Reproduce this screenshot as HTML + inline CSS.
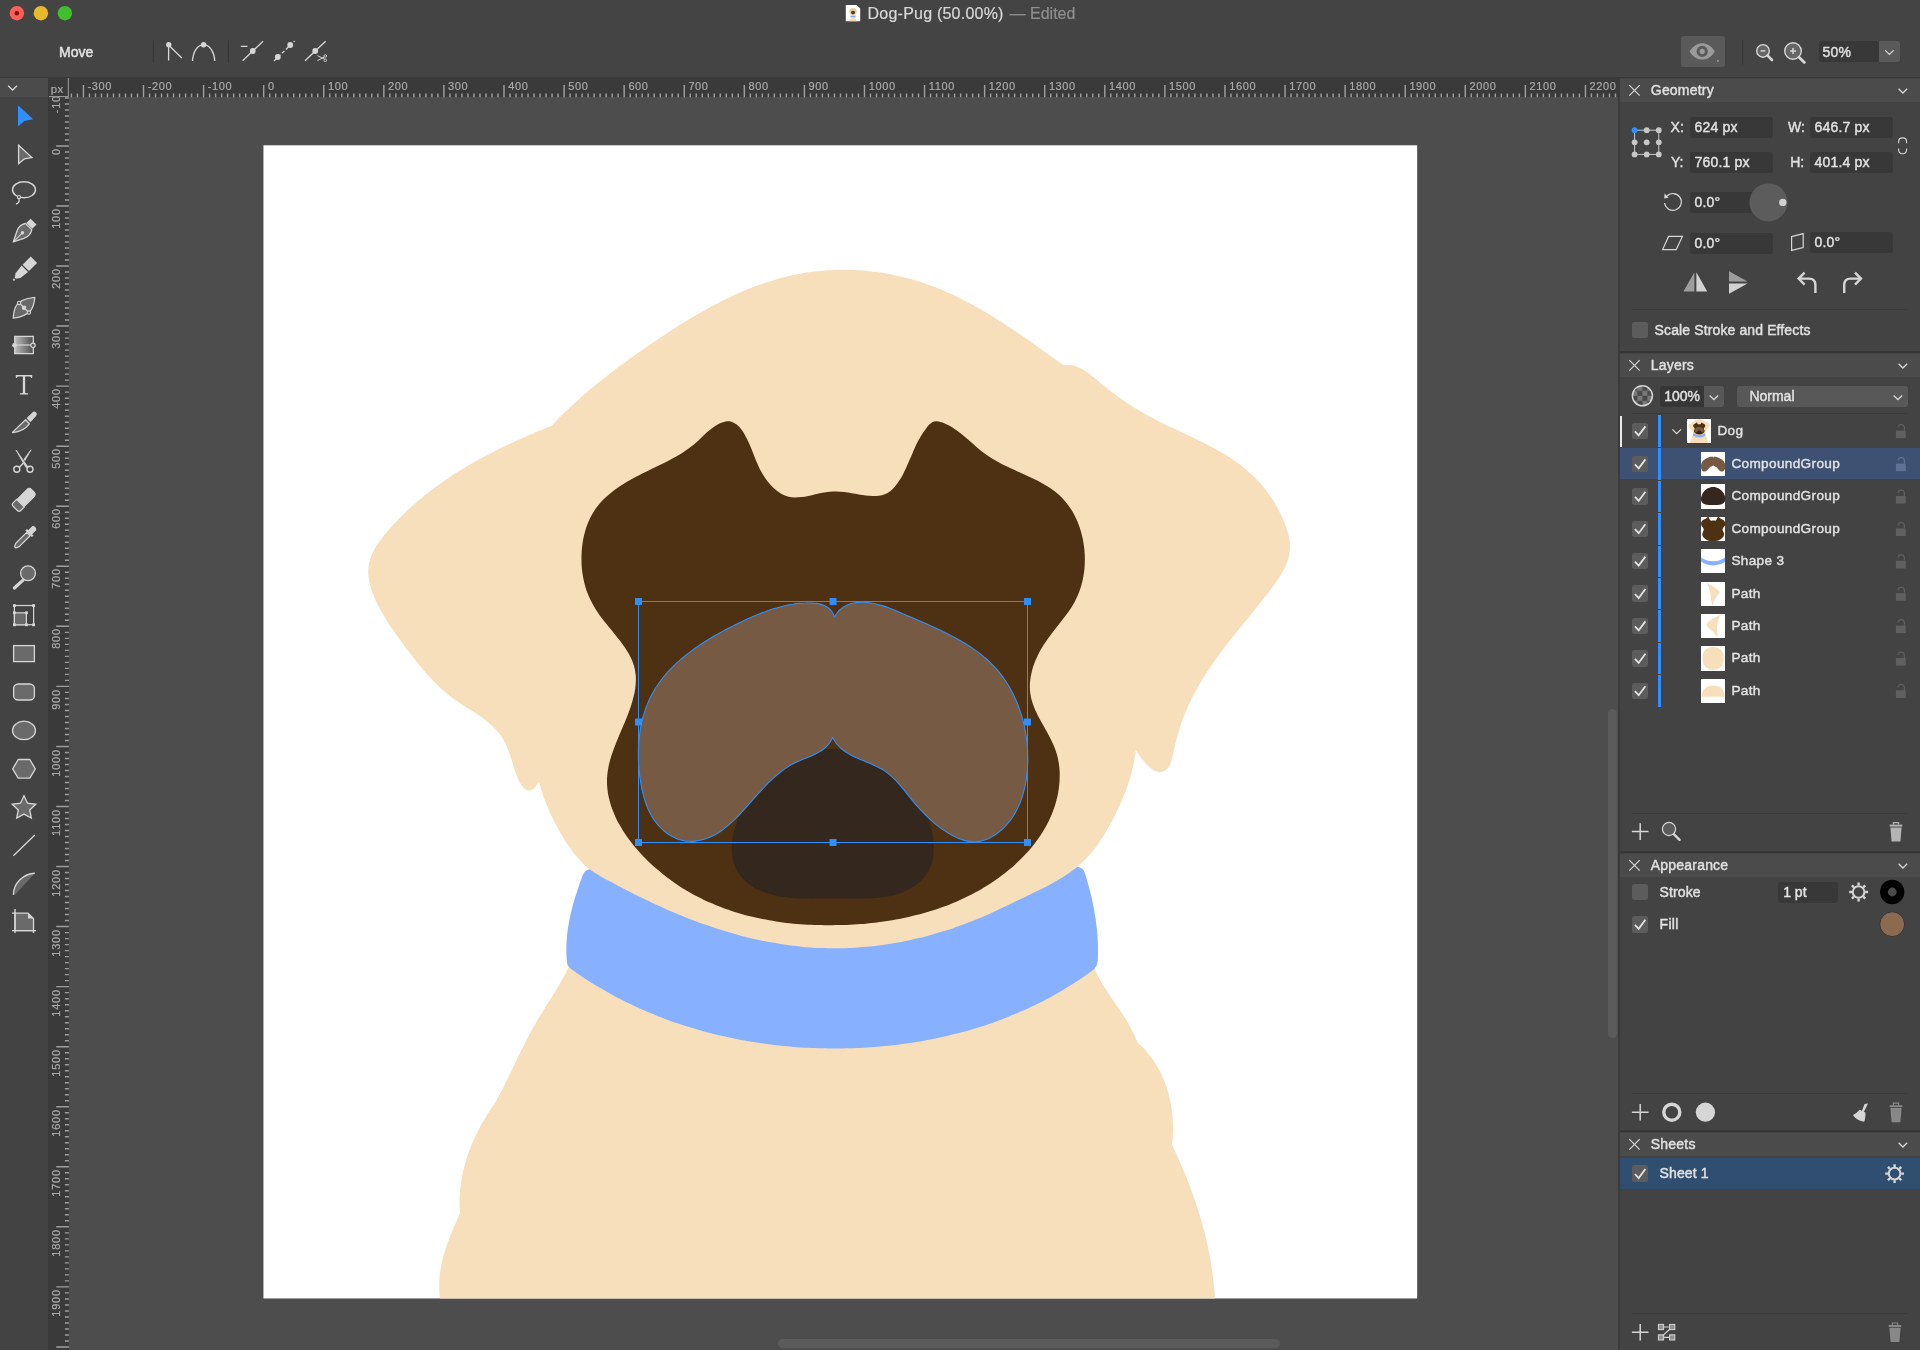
<!DOCTYPE html><html lang="en"><head><meta charset="utf-8"><title>Dog-Pug (50.00%) — Edited</title><style>
*{box-sizing:border-box;margin:0;padding:0}
html,body{width:1920px;height:1350px;overflow:hidden;background:#4d4d4d}
body{position:relative;will-change:transform;font-family:"Liberation Sans",sans-serif;color:#dedede;font-size:14px;line-height:1;-webkit-font-smoothing:antialiased}
.a{position:absolute}
.t{position:absolute;white-space:nowrap;line-height:16px;height:16px;-webkit-text-stroke:0.42px currentColor}
svg{position:absolute;left:0;top:0;overflow:visible}
#top{left:0;top:0;width:1920px;height:77.2px;background:#444}
#topline{left:0;top:76.8px;width:1920px;height:1.8px;background:#383838}
#left{left:0;top:78px;width:48px;height:1272px;background:#434343}
#lefthead{left:0;top:78px;width:48px;height:19px;background:#4b4b4b}
#vr{left:48.2px;top:77.3px;width:20.9px;height:1273px;background:#3a3a3a;overflow:hidden}
#hr{left:48.2px;top:77.3px;width:1570px;height:20.1px;background:#3a3a3a;overflow:hidden}
#corner{left:48.2px;top:77.3px;width:20.9px;height:20.1px;background:#3a3a3a}
.rl{position:absolute;font-size:11px;color:#ababab;letter-spacing:0.62px;-webkit-text-stroke:0.18px currentColor;line-height:12px;height:12px;white-space:nowrap}
.vl{position:absolute;font-size:11px;color:#ababab;letter-spacing:0.82px;-webkit-text-stroke:0.18px currentColor;line-height:12px;height:12px;white-space:nowrap;transform-origin:0 0;transform:rotate(-90deg)}
#panel{left:1620px;top:78px;width:300px;height:1272px;background:#434343}
#pborder{left:1618px;top:78px;width:2px;height:1272px;background:#3a3a3a}
.ph{position:absolute;left:1620px;width:300px;height:23.2px;background:#4b4b4b}
.pd{position:absolute;left:1620px;width:300px;height:2px;background:#363636}
.sep{position:absolute;left:1632px;width:276px;height:1px;background:#3a3a3a}
.fld{position:absolute;background:#383838;border-radius:3px;height:21px}
.cb{position:absolute;left:1632px;width:16.4px;height:16.4px;background:#5c5c5c;border-radius:2px}
.row{position:absolute;left:1620px;width:300px;height:31px}
.th{position:absolute;width:24.3px;height:24.3px;background:#fff;overflow:hidden}
.bar{position:absolute;left:1657.8px;width:3px;background:#2f8fff}
</style></head><body>
<svg class="art" width="1920" height="1350" viewBox="0 0 1920 1350">
<defs><clipPath id="ab"><rect x="263.44" y="145.3" width="1153.72" height="1153.14"/></clipPath></defs>
<rect x="263.44" y="145.3" width="1153.72" height="1153.14" fill="#fff"/>
<g clip-path="url(#ab)">
<g id="p-dog">
<path id="p-body" fill="#f7dfbc" d="M574.0 955.0C573.1 957.2 572.2 959.4 571.3 961.6C570.3 963.7 569.3 965.9 568.3 968.0C567.2 970.1 566.1 972.2 565.0 974.3C563.9 976.5 562.7 978.5 561.5 980.6C560.4 982.7 559.2 984.8 557.9 986.8C556.7 988.9 555.5 991.0 554.2 993.0C552.9 995.1 551.7 997.1 550.4 999.2C549.1 1001.2 547.8 1003.3 546.5 1005.3C545.3 1007.4 544.0 1009.5 542.7 1011.5C541.4 1013.6 540.2 1015.6 538.9 1017.7C537.7 1019.8 536.4 1021.9 535.2 1024.0C534.0 1026.1 532.8 1028.2 531.6 1030.3C530.5 1032.4 529.3 1034.6 528.2 1036.7C527.1 1038.9 526.0 1041.0 524.9 1043.2C523.8 1045.3 522.7 1047.5 521.6 1049.7C520.5 1051.9 519.5 1054.0 518.4 1056.2C517.4 1058.4 516.3 1060.6 515.3 1062.8C514.2 1065.0 513.2 1067.2 512.2 1069.3C511.1 1071.5 510.1 1073.7 509.0 1075.9C508.0 1078.1 506.9 1080.2 505.8 1082.4C504.8 1084.6 503.7 1086.7 502.6 1088.9C501.5 1091.0 500.4 1093.2 499.2 1095.3C498.1 1097.5 496.9 1099.6 495.8 1101.7C494.5 1103.6 493.1 1105.6 491.8 1107.5C490.5 1109.5 489.2 1111.5 487.9 1113.5C486.7 1115.5 485.4 1117.5 484.3 1119.5C483.1 1121.5 481.9 1123.6 480.8 1125.6C479.7 1127.7 478.6 1129.8 477.5 1131.9C476.5 1134.0 475.5 1136.1 474.5 1138.2C473.5 1140.3 472.6 1142.5 471.7 1144.6C470.8 1146.8 469.9 1149.0 469.1 1151.1C468.3 1153.3 467.6 1155.5 466.9 1157.7C466.2 1159.9 465.5 1162.2 464.9 1164.4C464.3 1166.7 463.7 1168.9 463.2 1171.2C462.7 1173.4 462.2 1175.7 461.8 1178.0C461.4 1180.3 461.0 1182.6 460.7 1184.9C460.4 1187.3 460.2 1189.6 460.0 1191.9C459.8 1194.3 459.7 1196.6 459.6 1199.0C459.6 1201.4 459.6 1203.7 459.6 1206.1C459.7 1208.5 459.9 1210.9 460.0 1213.3C459.0 1215.5 458.0 1217.8 457.0 1220.0C456.0 1222.3 455.0 1224.5 454.0 1226.8C453.1 1229.0 452.1 1231.3 451.2 1233.6C450.3 1235.9 449.4 1238.2 448.5 1240.5C447.7 1242.8 446.9 1245.2 446.1 1247.5C445.3 1249.8 444.6 1252.2 443.9 1254.5C443.3 1256.9 442.7 1259.3 442.1 1261.6C441.6 1264.0 441.1 1266.4 440.7 1268.8C440.3 1271.2 440.0 1273.7 439.7 1276.1C439.5 1278.5 439.3 1281.0 439.2 1283.4C439.2 1285.9 439.2 1288.4 439.3 1290.8C439.4 1293.3 439.8 1295.8 440.0 1298.3C440.0 1302.9 440.0 1307.4 440.0 1312.0C698.3 1312.0 956.7 1312.0 1215.0 1312.0C1215.0 1307.4 1215.0 1302.9 1215.0 1298.3C1214.8 1295.9 1214.7 1293.4 1214.5 1291.0C1214.3 1288.6 1214.0 1286.1 1213.8 1283.7C1213.5 1281.3 1213.3 1278.9 1212.9 1276.4C1212.6 1274.0 1212.3 1271.6 1211.9 1269.2C1211.6 1266.8 1211.2 1264.4 1210.8 1262.0C1210.4 1259.6 1210.0 1257.2 1209.5 1254.8C1209.0 1252.5 1208.6 1250.1 1208.1 1247.7C1207.6 1245.3 1207.0 1243.0 1206.5 1240.6C1205.9 1238.2 1205.4 1235.9 1204.8 1233.5C1204.2 1231.2 1203.6 1228.8 1202.9 1226.5C1202.3 1224.1 1201.6 1221.8 1201.0 1219.5C1200.3 1217.1 1199.6 1214.8 1198.9 1212.5C1198.1 1210.2 1197.4 1207.8 1196.6 1205.5C1195.9 1203.2 1195.1 1200.9 1194.3 1198.6C1193.5 1196.3 1192.7 1194.0 1191.9 1191.8C1191.0 1189.5 1190.2 1187.2 1189.3 1184.9C1188.5 1182.6 1187.6 1180.4 1186.7 1178.1C1185.8 1175.9 1184.9 1173.6 1183.9 1171.4C1183.0 1169.1 1182.0 1166.9 1181.1 1164.6C1180.1 1162.4 1179.1 1160.2 1178.1 1157.9C1177.1 1155.7 1176.1 1153.5 1175.1 1151.3C1174.1 1149.1 1173.0 1146.9 1172.0 1144.7C1172.2 1142.4 1172.5 1140.1 1172.7 1137.8C1172.8 1135.5 1172.9 1133.2 1173.0 1130.8C1173.0 1128.5 1173.0 1126.1 1172.9 1123.8C1172.8 1121.5 1172.7 1119.1 1172.5 1116.8C1172.3 1114.4 1172.1 1112.1 1171.7 1109.8C1171.4 1107.5 1171.0 1105.1 1170.6 1102.8C1170.1 1100.5 1169.6 1098.2 1169.1 1095.9C1168.5 1093.7 1167.9 1091.4 1167.2 1089.2C1166.5 1086.9 1165.7 1084.7 1164.9 1082.5C1164.0 1080.4 1163.1 1078.2 1162.2 1076.1C1161.2 1074.0 1160.2 1071.9 1159.1 1069.8C1158.0 1067.8 1156.8 1065.7 1155.6 1063.8C1154.4 1061.8 1153.1 1059.9 1151.7 1058.0C1150.3 1056.1 1148.9 1054.3 1147.4 1052.5C1145.9 1050.7 1144.3 1049.0 1142.7 1047.3C1141.0 1045.7 1139.2 1044.1 1137.5 1042.5C1136.6 1040.3 1135.8 1038.0 1134.8 1035.9C1133.8 1033.7 1132.8 1031.5 1131.6 1029.4C1130.5 1027.3 1129.4 1025.2 1128.2 1023.2C1127.0 1021.1 1125.7 1019.1 1124.4 1017.1C1123.1 1015.1 1121.8 1013.1 1120.5 1011.1C1119.2 1009.1 1117.8 1007.1 1116.4 1005.1C1115.1 1003.1 1113.7 1001.2 1112.4 999.2C1111.0 997.2 1109.7 995.3 1108.4 993.3C1107.1 991.3 1105.8 989.3 1104.5 987.3C1103.2 985.2 1102.0 983.2 1100.8 981.2C1099.7 979.1 1098.5 977.0 1097.5 974.9C1096.4 972.8 1095.4 970.7 1094.5 968.5C1093.6 966.3 1092.7 964.1 1092.0 961.9C1091.2 959.6 1090.7 957.3 1090.0 955.0C918.0 955.0 746.0 955.0 574.0 955.0Z"/>
<path id="p-collar" fill="#87b1ff" d="M588.5 869.6C587.3 870.2 585.9 870.6 585.0 871.5C583.9 872.6 583.4 874.2 582.6 875.5C581.8 877.8 580.9 880.0 580.1 882.3C579.3 884.6 578.5 886.9 577.8 889.2C577.0 891.5 576.3 893.8 575.5 896.1C574.8 898.4 574.1 900.7 573.5 903.1C572.8 905.4 572.2 907.8 571.6 910.1C571.0 912.5 570.5 914.8 570.0 917.2C569.5 919.6 569.0 922.0 568.6 924.3C568.2 926.7 567.8 929.1 567.5 931.5C567.2 933.9 567.0 936.3 566.8 938.7C566.6 941.1 566.4 943.5 566.4 946.0C566.3 948.4 566.3 950.8 566.4 953.2C566.4 955.6 566.7 958.1 566.8 960.5C567.1 962.1 567.1 963.8 567.8 965.2C568.5 966.7 569.9 967.7 571.0 969.0C572.9 970.3 574.8 971.7 576.7 973.0C578.7 974.4 580.6 975.7 582.5 977.0C584.5 978.3 586.4 979.6 588.4 980.8C590.4 982.1 592.4 983.3 594.3 984.5C596.3 985.7 598.3 986.9 600.3 988.1C602.4 989.3 604.4 990.5 606.4 991.6C608.4 992.8 610.5 993.9 612.5 995.0C614.6 996.1 616.6 997.2 618.7 998.3C620.8 999.4 622.8 1000.4 624.9 1001.5C627.0 1002.5 629.1 1003.5 631.2 1004.5C633.3 1005.5 635.4 1006.5 637.5 1007.5C639.7 1008.4 641.8 1009.4 643.9 1010.3C646.1 1011.3 648.2 1012.2 650.3 1013.1C652.5 1014.0 654.7 1014.8 656.8 1015.7C659.0 1016.6 661.2 1017.4 663.3 1018.2C665.5 1019.1 667.7 1019.9 669.9 1020.7C672.1 1021.5 674.3 1022.2 676.5 1023.0C678.7 1023.7 680.9 1024.5 683.2 1025.2C685.4 1025.9 687.6 1026.6 689.9 1027.3C692.1 1028.0 694.3 1028.7 696.6 1029.3C698.8 1030.0 701.1 1030.6 703.3 1031.2C705.6 1031.9 707.8 1032.5 710.1 1033.0C712.4 1033.6 714.7 1034.2 716.9 1034.7C719.2 1035.3 721.5 1035.8 723.8 1036.3C726.1 1036.9 728.4 1037.4 730.7 1037.8C733.0 1038.3 735.3 1038.8 737.6 1039.2C739.9 1039.7 742.2 1040.1 744.5 1040.5C746.8 1041.0 749.1 1041.4 751.4 1041.7C753.8 1042.1 756.1 1042.5 758.4 1042.8C760.7 1043.2 763.1 1043.5 765.4 1043.8C767.7 1044.2 770.1 1044.5 772.4 1044.7C774.7 1045.0 777.1 1045.3 779.4 1045.5C781.8 1045.8 784.1 1046.0 786.4 1046.3C788.8 1046.5 791.1 1046.7 793.5 1046.9C795.8 1047.1 798.2 1047.2 800.5 1047.4C802.9 1047.5 805.2 1047.7 807.6 1047.8C810.0 1047.9 812.3 1048.0 814.7 1048.1C817.0 1048.2 819.4 1048.3 821.7 1048.3C824.1 1048.4 826.5 1048.4 828.8 1048.5C831.2 1048.5 833.5 1048.5 835.9 1048.5C838.3 1048.5 840.6 1048.5 843.0 1048.4C845.3 1048.4 847.7 1048.4 850.1 1048.3C852.4 1048.2 854.8 1048.1 857.1 1048.0C859.5 1047.9 861.8 1047.8 864.2 1047.7C866.5 1047.6 868.9 1047.4 871.3 1047.2C873.6 1047.1 876.0 1046.9 878.3 1046.7C880.6 1046.5 883.0 1046.3 885.3 1046.1C887.7 1045.8 890.0 1045.6 892.4 1045.3C894.7 1045.1 897.0 1044.8 899.4 1044.5C901.7 1044.2 904.0 1043.9 906.4 1043.5C908.7 1043.2 911.0 1042.9 913.3 1042.5C915.7 1042.1 918.0 1041.8 920.3 1041.4C922.6 1041.0 924.9 1040.5 927.2 1040.1C929.5 1039.7 931.8 1039.2 934.1 1038.8C936.4 1038.3 938.7 1037.8 941.0 1037.3C943.3 1036.8 945.6 1036.3 947.9 1035.8C950.1 1035.2 952.4 1034.7 954.7 1034.1C956.9 1033.5 959.2 1032.9 961.5 1032.3C963.7 1031.7 966.0 1031.1 968.2 1030.5C970.5 1029.8 972.7 1029.2 974.9 1028.5C977.2 1027.8 979.4 1027.1 981.6 1026.4C983.8 1025.7 986.1 1025.0 988.3 1024.2C990.5 1023.5 992.7 1022.7 994.9 1021.9C997.1 1021.1 999.2 1020.3 1001.4 1019.5C1003.6 1018.7 1005.8 1017.8 1007.9 1017.0C1010.1 1016.1 1012.3 1015.2 1014.4 1014.3C1016.6 1013.4 1018.7 1012.5 1020.8 1011.6C1023.0 1010.7 1025.1 1009.7 1027.2 1008.7C1029.3 1007.8 1031.4 1006.8 1033.5 1005.8C1035.6 1004.8 1037.7 1003.7 1039.8 1002.7C1041.8 1001.7 1043.9 1000.6 1046.0 999.5C1048.0 998.4 1050.1 997.3 1052.1 996.2C1054.2 995.1 1056.2 993.9 1058.2 992.8C1060.2 991.6 1062.2 990.4 1064.2 989.2C1066.2 988.0 1068.2 986.8 1070.2 985.6C1072.2 984.3 1074.2 983.1 1076.1 981.8C1078.1 980.5 1080.0 979.2 1081.9 977.9C1083.9 976.6 1085.8 975.3 1087.7 973.9C1089.6 972.6 1091.5 971.2 1093.4 969.8C1094.5 968.4 1095.8 967.2 1096.6 965.6C1097.3 964.0 1097.4 962.2 1097.8 960.5C1097.9 958.1 1098.0 955.6 1098.0 953.2C1098.1 950.8 1098.0 948.4 1098.0 945.9C1097.9 943.5 1097.8 941.1 1097.7 938.7C1097.5 936.3 1097.3 933.9 1097.1 931.5C1096.9 929.0 1096.6 926.6 1096.3 924.2C1096.0 921.8 1095.7 919.4 1095.3 917.0C1094.9 914.6 1094.5 912.3 1094.1 909.9C1093.7 907.5 1093.2 905.1 1092.7 902.7C1092.2 900.4 1091.7 898.0 1091.1 895.6C1090.5 893.3 1090.0 890.9 1089.3 888.6C1088.7 886.2 1088.1 883.9 1087.4 881.6C1086.8 879.2 1086.1 876.9 1085.4 874.6C1084.6 872.9 1084.2 871.0 1083.0 869.6C1082.1 868.5 1080.7 868.0 1079.5 867.2C1053.0 861.5 1026.5 855.7 1000.0 850.0C886.7 850.0 773.3 850.0 660.0 850.0C636.2 856.5 612.3 863.1 588.5 869.6Z"/>
<path id="p-head" fill="#f7dfbc" d="M1063.3 365.0C1065.8 365.0 1068.3 364.8 1070.8 365.1C1073.1 365.4 1075.4 366.1 1077.5 366.9C1079.7 367.7 1081.7 368.7 1083.7 369.9C1085.7 371.1 1087.6 372.5 1089.5 373.9C1091.4 375.3 1093.2 376.8 1095.0 378.3C1096.8 379.9 1098.6 381.4 1100.4 383.0C1102.3 384.5 1104.1 386.0 1105.9 387.5C1107.8 388.9 1109.6 390.4 1111.5 391.8C1113.4 393.2 1115.2 394.6 1117.1 396.0C1119.0 397.4 1120.9 398.7 1122.8 400.1C1124.8 401.4 1126.7 402.7 1128.6 404.0C1130.6 405.2 1132.5 406.5 1134.5 407.7C1136.5 408.9 1138.5 410.1 1140.5 411.3C1142.5 412.5 1144.5 413.7 1146.5 414.8C1148.6 415.9 1150.6 417.0 1152.7 418.1C1154.8 419.2 1156.8 420.3 1158.9 421.4C1161.0 422.4 1163.1 423.5 1165.2 424.5C1167.3 425.5 1169.5 426.5 1171.6 427.6C1173.7 428.6 1175.8 429.6 1178.0 430.6C1180.1 431.6 1182.2 432.6 1184.4 433.6C1186.5 434.6 1188.6 435.6 1190.7 436.6C1192.9 437.6 1195.0 438.6 1197.1 439.7C1199.2 440.7 1201.3 441.7 1203.4 442.8C1205.5 443.8 1207.6 444.9 1209.7 446.0C1211.7 447.0 1213.8 448.1 1215.8 449.3C1217.9 450.4 1219.9 451.5 1221.9 452.7C1223.9 453.9 1225.9 455.1 1227.8 456.3C1229.8 457.5 1231.7 458.8 1233.6 460.1C1235.5 461.4 1237.4 462.7 1239.3 464.1C1241.1 465.5 1243.0 466.9 1244.7 468.4C1246.5 469.8 1248.3 471.3 1250.0 472.9C1251.7 474.4 1253.4 476.0 1255.1 477.7C1256.7 479.3 1258.3 481.0 1259.9 482.8C1261.5 484.6 1263.0 486.4 1264.4 488.2C1265.9 490.1 1267.4 492.0 1268.7 494.0C1270.1 496.0 1271.5 498.0 1272.8 500.0C1274.0 502.1 1275.3 504.2 1276.5 506.3C1277.7 508.4 1278.8 510.5 1279.9 512.7C1281.0 514.9 1282.0 517.1 1283.0 519.3C1283.9 521.5 1284.9 523.7 1285.7 525.9C1286.5 528.1 1287.3 530.4 1287.9 532.6C1288.5 534.8 1289.1 537.1 1289.5 539.3C1289.8 541.5 1290.1 543.8 1290.1 546.0C1290.1 548.2 1290.0 550.3 1289.6 552.5C1289.3 554.7 1288.8 556.8 1288.2 558.9C1287.6 561.1 1286.8 563.2 1285.9 565.2C1285.0 567.3 1283.9 569.4 1282.8 571.4C1281.7 573.5 1280.5 575.5 1279.2 577.5C1277.9 579.5 1276.6 581.5 1275.2 583.5C1273.8 585.5 1272.3 587.4 1270.8 589.4C1269.4 591.3 1267.8 593.3 1266.3 595.2C1264.8 597.1 1263.3 599.0 1261.8 600.9C1260.3 602.8 1258.8 604.7 1257.3 606.6C1255.8 608.4 1254.3 610.3 1252.8 612.2C1251.3 614.0 1249.8 615.9 1248.3 617.7C1246.8 619.6 1245.3 621.4 1243.8 623.2C1242.3 625.1 1240.8 626.9 1239.3 628.7C1237.9 630.5 1236.4 632.4 1234.9 634.2C1233.5 636.0 1232.0 637.8 1230.6 639.7C1229.2 641.5 1227.7 643.3 1226.3 645.1C1224.9 647.0 1223.5 648.8 1222.1 650.7C1220.7 652.5 1219.4 654.3 1218.0 656.2C1216.7 658.1 1215.3 659.9 1214.0 661.8C1212.7 663.7 1211.4 665.6 1210.1 667.5C1208.8 669.4 1207.5 671.3 1206.3 673.2C1205.1 675.1 1203.8 677.0 1202.6 679.0C1201.4 680.9 1200.3 682.9 1199.1 684.9C1197.9 686.9 1196.8 688.9 1195.7 690.9C1194.6 692.9 1193.5 695.0 1192.5 697.0C1191.4 699.1 1190.4 701.2 1189.4 703.3C1188.4 705.4 1187.5 707.6 1186.6 709.7C1185.6 711.9 1184.7 714.1 1183.9 716.3C1183.0 718.5 1182.2 720.8 1181.4 723.0C1180.6 725.3 1179.8 727.6 1179.1 729.9C1178.4 732.3 1177.7 734.7 1177.0 737.0C1176.4 739.5 1175.7 741.9 1175.2 744.4C1174.6 746.8 1174.1 749.4 1173.6 751.9C1173.0 754.3 1172.6 756.7 1171.8 759.1C1171.2 761.3 1170.6 763.5 1169.5 765.4C1168.6 767.1 1167.5 768.8 1166.0 770.0C1164.5 771.1 1162.8 771.9 1161.0 772.1C1159.0 772.3 1157.0 771.9 1155.2 771.1C1153.1 770.2 1151.2 768.7 1149.4 767.1C1147.4 765.4 1145.7 763.4 1144.0 761.4C1142.3 759.4 1140.8 757.3 1139.3 755.2C1138.0 753.4 1137.0 751.5 1135.8 749.7C1135.5 752.0 1135.2 754.4 1134.9 756.7C1134.5 759.0 1134.1 761.3 1133.7 763.6C1133.2 765.9 1132.7 768.2 1132.1 770.5C1131.6 772.7 1130.9 775.0 1130.3 777.2C1129.6 779.4 1128.9 781.6 1128.2 783.8C1127.5 786.1 1126.7 788.2 1125.9 790.4C1125.0 792.6 1124.2 794.8 1123.3 796.9C1122.4 799.1 1121.5 801.2 1120.5 803.4C1119.6 805.5 1118.6 807.6 1117.6 809.8C1116.6 811.9 1115.5 814.0 1114.5 816.1C1113.4 818.2 1112.3 820.3 1111.2 822.4C1110.1 824.5 1109.0 826.5 1107.8 828.6C1106.6 830.6 1105.4 832.7 1104.2 834.7C1103.0 836.7 1101.7 838.7 1100.4 840.6C1099.1 842.6 1097.8 844.5 1096.4 846.4C1095.0 848.2 1093.6 850.1 1092.2 851.9C1090.7 853.6 1089.2 855.4 1087.6 857.1C1086.1 858.8 1084.5 860.4 1082.8 862.0C1081.1 863.6 1079.4 865.1 1077.7 866.6C1075.9 868.1 1074.1 869.5 1072.2 870.8C1070.4 872.2 1068.5 873.5 1066.5 874.8C1064.6 876.1 1062.6 877.4 1060.6 878.6C1058.6 879.8 1056.6 880.9 1054.5 882.1C1052.5 883.2 1050.4 884.3 1048.3 885.4C1046.2 886.5 1044.1 887.6 1042.0 888.7C1039.9 889.7 1037.7 890.8 1035.6 891.8C1033.5 892.8 1031.3 893.8 1029.2 894.9C1027.1 895.9 1025.0 896.9 1022.9 897.9C1020.7 898.9 1018.6 900.0 1016.5 901.0C1014.4 902.0 1012.4 903.0 1010.3 904.0C1008.2 905.0 1006.1 906.0 1004.0 907.0C1001.9 908.0 999.8 909.0 997.7 910.0C995.6 911.0 993.6 912.0 991.4 912.9C989.3 913.9 987.2 914.8 985.1 915.7C983.0 916.7 980.9 917.6 978.7 918.5C976.6 919.4 974.5 920.3 972.3 921.1C970.1 922.0 968.0 922.8 965.8 923.6C963.6 924.5 961.4 925.3 959.2 926.1C957.0 926.8 954.8 927.6 952.6 928.4C950.3 929.1 948.1 929.8 945.9 930.5C943.6 931.3 941.4 931.9 939.1 932.6C936.9 933.3 934.6 933.9 932.4 934.6C930.1 935.2 927.8 935.8 925.5 936.4C923.2 937.0 921.0 937.6 918.7 938.1C916.4 938.7 914.1 939.2 911.8 939.7C909.5 940.2 907.1 940.7 904.8 941.2C902.5 941.6 900.2 942.1 897.9 942.5C895.5 942.9 893.2 943.3 890.9 943.7C888.6 944.1 886.2 944.4 883.9 944.8C881.6 945.1 879.2 945.4 876.9 945.7C874.5 946.0 872.2 946.2 869.9 946.5C867.5 946.7 865.2 946.9 862.8 947.1C860.5 947.3 858.1 947.5 855.8 947.7C853.5 947.8 851.1 947.9 848.8 948.0C846.4 948.1 844.1 948.2 841.7 948.3C839.4 948.3 837.1 948.3 834.7 948.3C832.4 948.3 830.1 948.3 827.7 948.3C825.4 948.2 823.1 948.2 820.7 948.1C818.4 948.0 816.1 947.8 813.8 947.7C811.4 947.5 809.1 947.4 806.8 947.2C804.5 947.0 802.2 946.8 799.9 946.5C797.6 946.3 795.2 946.0 792.9 945.8C790.6 945.5 788.3 945.2 786.0 944.8C783.7 944.5 781.4 944.2 779.2 943.8C776.9 943.4 774.6 943.0 772.3 942.6C770.0 942.2 767.7 941.8 765.4 941.3C763.2 940.9 760.9 940.4 758.6 939.9C756.4 939.4 754.1 938.9 751.8 938.4C749.6 937.9 747.3 937.3 745.0 936.7C742.8 936.2 740.5 935.6 738.3 935.0C736.0 934.4 733.8 933.7 731.6 933.1C729.3 932.5 727.1 931.8 724.8 931.1C722.6 930.4 720.4 929.7 718.2 929.0C715.9 928.3 713.7 927.6 711.5 926.8C709.3 926.1 707.1 925.3 704.9 924.6C702.7 923.8 700.5 923.0 698.3 922.2C696.1 921.4 693.9 920.6 691.7 919.7C689.5 918.9 687.3 918.0 685.1 917.2C683.0 916.3 680.8 915.4 678.6 914.5C676.5 913.6 674.3 912.7 672.1 911.8C670.0 910.9 667.8 909.9 665.7 909.0C663.5 908.0 661.4 907.1 659.3 906.1C657.1 905.1 655.0 904.1 652.9 903.2C650.7 902.2 648.6 901.1 646.5 900.1C644.4 899.1 642.3 898.1 640.2 897.1C638.1 896.0 636.0 895.0 633.9 893.9C631.8 892.9 629.7 891.8 627.6 890.8C625.6 889.7 623.5 888.6 621.4 887.5C619.4 886.5 617.3 885.4 615.3 884.3C613.2 883.2 611.2 882.2 609.1 881.1C607.1 880.0 605.1 878.9 603.1 877.8C601.1 876.7 599.1 875.5 597.2 874.3C595.3 873.1 593.4 871.9 591.5 870.6C589.7 869.2 587.9 867.8 586.2 866.4C584.5 864.9 582.9 863.3 581.3 861.7C579.7 860.1 578.1 858.4 576.6 856.6C575.1 854.9 573.7 853.1 572.3 851.2C570.9 849.4 569.5 847.5 568.2 845.6C566.9 843.6 565.6 841.6 564.4 839.6C563.1 837.6 561.9 835.6 560.7 833.5C559.5 831.5 558.4 829.4 557.3 827.3C556.1 825.2 555.0 823.1 554.0 821.0C552.9 818.9 551.9 816.8 550.9 814.6C549.9 812.5 548.9 810.3 548.0 808.1C547.1 806.0 546.2 803.8 545.3 801.6C544.5 799.4 543.7 797.2 543.0 795.0C542.3 792.8 541.6 790.6 540.9 788.4C540.3 786.2 539.8 783.9 539.2 781.7C537.2 784.1 535.7 787.0 533.3 789.0C531.8 790.1 529.9 790.6 528.1 790.4C526.4 790.2 525.0 789.0 523.8 787.9C522.3 786.6 521.3 784.9 520.2 783.2C519.1 781.3 518.2 779.3 517.4 777.3C516.4 775.1 515.7 772.8 514.9 770.6C514.1 768.2 513.4 765.8 512.7 763.4C511.9 761.0 511.2 758.5 510.4 756.1C509.6 753.7 508.8 751.3 507.9 748.9C506.9 746.6 506.0 744.3 504.8 742.2C503.7 740.1 502.5 738.0 501.1 736.1C499.8 734.2 498.4 732.4 496.8 730.7C495.3 728.9 493.7 727.3 492.0 725.7C490.3 724.2 488.6 722.7 486.8 721.3C485.0 719.8 483.1 718.4 481.2 717.1C479.3 715.7 477.4 714.4 475.4 713.1C473.5 711.8 471.5 710.5 469.5 709.3C467.5 708.0 465.5 706.7 463.5 705.4C461.5 704.1 459.5 702.8 457.6 701.5C455.6 700.1 453.7 698.8 451.8 697.4C449.9 695.9 448.0 694.5 446.2 692.9C444.4 691.4 442.6 689.9 440.8 688.3C439.1 686.6 437.4 685.0 435.7 683.3C434.0 681.6 432.3 679.9 430.7 678.2C429.1 676.5 427.5 674.7 425.9 672.9C424.3 671.1 422.8 669.3 421.3 667.4C419.7 665.6 418.2 663.8 416.8 661.9C415.3 660.0 413.8 658.2 412.4 656.3C410.9 654.4 409.5 652.5 408.0 650.6C406.6 648.7 405.2 646.8 403.8 644.9C402.4 643.1 401.0 641.2 399.7 639.3C398.3 637.4 396.9 635.6 395.6 633.7C394.2 631.8 392.9 629.9 391.6 628.0C390.3 626.1 389.0 624.1 387.7 622.2C386.4 620.2 385.2 618.3 384.0 616.3C382.8 614.2 381.6 612.2 380.5 610.1C379.4 608.0 378.3 605.9 377.2 603.7C376.2 601.5 375.1 599.3 374.2 597.0C373.3 594.7 372.4 592.4 371.6 590.0C370.8 587.7 370.1 585.4 369.6 583.0C369.1 580.7 368.7 578.3 368.4 576.0C368.2 573.7 368.1 571.3 368.3 569.1C368.4 566.8 368.8 564.6 369.3 562.4C369.8 560.2 370.5 558.1 371.3 556.0C372.1 553.8 373.1 551.8 374.2 549.8C375.2 547.7 376.5 545.7 377.7 543.8C379.1 541.8 380.5 539.9 381.9 538.0C383.3 536.1 384.9 534.2 386.4 532.4C388.0 530.5 389.6 528.7 391.2 526.9C392.8 525.2 394.4 523.4 396.1 521.7C397.7 519.9 399.4 518.2 401.1 516.5C402.8 514.8 404.5 513.2 406.2 511.5C407.9 509.9 409.7 508.3 411.4 506.7C413.2 505.1 415.0 503.5 416.8 502.0C418.6 500.4 420.4 498.9 422.2 497.4C424.0 495.9 425.9 494.4 427.7 493.0C429.6 491.5 431.5 490.1 433.3 488.7C435.2 487.3 437.1 485.9 439.0 484.5C440.9 483.1 442.9 481.8 444.8 480.4C446.8 479.1 448.7 477.8 450.7 476.5C452.6 475.2 454.6 473.9 456.6 472.6C458.6 471.4 460.6 470.1 462.6 468.9C464.6 467.7 466.6 466.5 468.7 465.3C470.7 464.1 472.8 462.9 474.8 461.7C476.9 460.6 478.9 459.4 481.0 458.3C483.1 457.2 485.2 456.1 487.2 455.0C489.3 453.9 491.4 452.8 493.5 451.7C495.6 450.6 497.7 449.6 499.9 448.6C502.0 447.5 504.1 446.5 506.2 445.5C508.4 444.5 510.5 443.4 512.7 442.5C514.8 441.5 517.0 440.5 519.1 439.5C521.3 438.6 523.4 437.6 525.6 436.7C527.7 435.7 529.9 434.8 532.1 433.9C534.3 432.9 536.4 432.0 538.6 431.1C540.8 430.2 543.0 429.3 545.1 428.4C547.3 427.5 549.5 426.7 551.7 425.8C553.3 424.1 554.9 422.4 556.6 420.7C558.2 419.0 559.8 417.3 561.5 415.6C563.1 414.0 564.8 412.4 566.5 410.7C568.2 409.1 569.8 407.5 571.5 405.9C573.2 404.3 575.0 402.8 576.7 401.2C578.4 399.6 580.1 398.1 581.9 396.6C583.6 395.0 585.4 393.5 587.1 392.0C588.9 390.5 590.7 389.0 592.4 387.5C594.2 386.1 596.0 384.6 597.8 383.1C599.6 381.7 601.4 380.2 603.2 378.8C605.1 377.4 606.9 375.9 608.7 374.5C610.6 373.1 612.4 371.7 614.3 370.3C616.1 368.9 618.0 367.5 619.9 366.1C621.7 364.7 623.6 363.3 625.5 361.9C627.4 360.6 629.3 359.2 631.2 357.8C633.1 356.5 635.0 355.1 636.9 353.8C638.8 352.4 640.7 351.1 642.7 349.7C644.6 348.4 646.5 347.0 648.5 345.7C650.4 344.3 652.4 343.0 654.3 341.7C656.3 340.3 658.2 339.0 660.2 337.7C662.2 336.4 664.2 335.0 666.1 333.7C668.1 332.4 670.1 331.1 672.1 329.8C674.1 328.6 676.1 327.3 678.1 326.0C680.1 324.7 682.2 323.5 684.2 322.2C686.2 321.0 688.2 319.8 690.3 318.5C692.3 317.3 694.4 316.1 696.4 314.9C698.5 313.7 700.5 312.5 702.6 311.4C704.7 310.2 706.7 309.0 708.8 307.9C710.9 306.8 713.0 305.7 715.1 304.6C717.2 303.5 719.3 302.4 721.4 301.3C723.5 300.3 725.6 299.2 727.7 298.2C729.8 297.2 732.0 296.2 734.1 295.2C736.2 294.2 738.4 293.3 740.5 292.3C742.7 291.4 744.8 290.5 747.0 289.6C749.1 288.7 751.3 287.9 753.5 287.0C755.7 286.2 757.8 285.4 760.0 284.6C762.2 283.8 764.4 283.1 766.6 282.3C768.8 281.6 771.0 280.9 773.3 280.2C775.5 279.6 777.7 278.9 779.9 278.3C782.2 277.7 784.4 277.1 786.7 276.6C788.9 276.0 791.2 275.5 793.4 275.0C795.7 274.5 797.9 274.1 800.2 273.7C802.5 273.3 804.8 272.9 807.1 272.5C809.3 272.2 811.6 271.9 813.9 271.6C816.2 271.3 818.5 271.1 820.8 270.9C823.1 270.6 825.5 270.5 827.8 270.3C830.1 270.2 832.4 270.1 834.7 270.0C837.0 269.9 839.4 269.9 841.7 269.8C844.0 269.8 846.3 269.8 848.6 269.9C851.0 269.9 853.3 270.0 855.6 270.1C857.9 270.3 860.3 270.4 862.6 270.6C864.9 270.8 867.2 271.0 869.5 271.2C871.8 271.5 874.2 271.8 876.5 272.1C878.8 272.4 881.1 272.7 883.4 273.1C885.7 273.5 888.0 273.9 890.3 274.3C892.6 274.7 894.9 275.2 897.2 275.7C899.4 276.2 901.7 276.7 904.0 277.3C906.3 277.9 908.5 278.5 910.8 279.1C913.0 279.7 915.3 280.4 917.5 281.1C919.7 281.8 922.0 282.5 924.2 283.2C926.4 284.0 928.6 284.8 930.8 285.6C933.0 286.4 935.2 287.2 937.4 288.1C939.6 289.0 941.7 289.9 943.9 290.8C946.1 291.7 948.2 292.7 950.3 293.6C952.5 294.6 954.6 295.6 956.7 296.6C958.9 297.7 961.0 298.7 963.1 299.8C965.2 300.9 967.3 302.0 969.3 303.1C971.4 304.2 973.5 305.3 975.6 306.5C977.6 307.6 979.7 308.8 981.7 310.0C983.8 311.2 985.8 312.4 987.9 313.6C989.9 314.8 991.9 316.1 993.9 317.3C995.9 318.6 997.9 319.8 999.9 321.1C1001.9 322.4 1003.9 323.6 1005.9 324.9C1007.9 326.2 1009.9 327.5 1011.8 328.8C1013.8 330.2 1015.8 331.5 1017.7 332.8C1019.7 334.1 1021.6 335.5 1023.5 336.8C1025.5 338.1 1027.4 339.5 1029.3 340.8C1031.3 342.2 1033.2 343.5 1035.1 344.9C1037.0 346.2 1038.9 347.6 1040.8 348.9C1042.7 350.3 1044.6 351.6 1046.5 353.0C1048.4 354.3 1050.2 355.7 1052.1 357.0C1054.0 358.3 1055.9 359.7 1057.7 361.0C1059.6 362.3 1061.4 363.7 1063.3 365.0Z"/>
<path id="p-mask" fill="#4e3012" d="M832.2 925.2C829.8 925.2 827.4 925.2 825.1 925.2C822.7 925.2 820.4 925.2 818.0 925.1C815.7 925.0 813.3 924.9 811.0 924.8C808.6 924.7 806.3 924.6 803.9 924.4C801.6 924.3 799.3 924.1 796.9 923.9C794.6 923.7 792.3 923.5 790.0 923.2C787.6 923.0 785.3 922.7 783.0 922.4C780.7 922.1 778.4 921.8 776.1 921.5C773.8 921.1 771.5 920.7 769.2 920.3C767.0 919.9 764.7 919.5 762.4 919.1C760.2 918.6 757.9 918.1 755.6 917.6C753.4 917.1 751.1 916.6 748.9 916.0C746.7 915.5 744.5 914.9 742.2 914.2C740.0 913.6 737.8 913.0 735.6 912.3C733.4 911.6 731.2 910.9 729.1 910.1C726.9 909.4 724.7 908.6 722.6 907.8C720.4 907.0 718.3 906.2 716.1 905.3C714.0 904.4 711.9 903.5 709.8 902.6C707.6 901.6 705.6 900.7 703.5 899.7C701.4 898.6 699.3 897.6 697.3 896.5C695.2 895.5 693.2 894.3 691.1 893.2C689.1 892.1 687.1 890.9 685.1 889.7C683.1 888.4 681.1 887.2 679.1 885.9C677.1 884.6 675.2 883.3 673.3 881.9C671.3 880.5 669.4 879.1 667.5 877.7C665.6 876.2 663.7 874.8 661.8 873.3C659.9 871.7 658.1 870.2 656.2 868.6C654.4 867.0 652.6 865.3 650.8 863.7C649.0 862.0 647.2 860.3 645.5 858.5C643.8 856.8 642.1 855.0 640.4 853.2C638.8 851.4 637.2 849.6 635.6 847.7C634.0 845.9 632.5 844.0 631.0 842.0C629.5 840.1 628.1 838.2 626.7 836.2C625.3 834.3 624.0 832.3 622.7 830.2C621.5 828.2 620.3 826.2 619.1 824.1C618.0 822.1 616.9 820.0 615.9 817.9C615.0 815.8 614.0 813.7 613.2 811.6C612.3 809.5 611.6 807.3 610.9 805.2C610.2 803.0 609.6 800.9 609.1 798.7C608.6 796.5 608.1 794.4 607.8 792.2C607.5 790.0 607.3 787.8 607.1 785.6C607.0 783.4 607.0 781.2 607.0 778.9C607.1 776.7 607.3 774.5 607.6 772.3C607.9 770.1 608.3 767.9 608.7 765.7C609.2 763.4 609.8 761.2 610.4 759.0C611.1 756.8 611.8 754.5 612.6 752.3C613.3 750.1 614.2 747.9 615.0 745.7C615.9 743.4 616.8 741.2 617.7 739.0C618.6 736.7 619.6 734.5 620.5 732.3C621.5 730.0 622.5 727.8 623.4 725.6C624.3 723.3 625.3 721.1 626.2 718.8C627.1 716.6 628.0 714.4 628.8 712.1C629.6 709.8 630.4 707.6 631.2 705.3C631.9 703.1 632.6 700.8 633.1 698.6C633.7 696.3 634.2 694.1 634.7 691.8C635.1 689.6 635.4 687.4 635.6 685.1C635.8 682.9 635.9 680.7 635.9 678.5C635.8 676.3 635.7 674.1 635.3 672.0C635.0 669.8 634.6 667.7 633.9 665.6C633.3 663.5 632.5 661.4 631.6 659.3C630.7 657.2 629.6 655.2 628.5 653.2C627.3 651.2 626.0 649.2 624.7 647.2C623.3 645.2 621.8 643.2 620.4 641.3C618.9 639.3 617.3 637.4 615.8 635.4C614.2 633.5 612.6 631.6 611.0 629.6C609.4 627.7 607.9 625.8 606.3 623.8C604.8 621.9 603.2 620.0 601.7 618.0C600.3 616.1 598.9 614.1 597.6 612.2C596.3 610.2 595.0 608.3 593.9 606.3C592.7 604.3 591.7 602.3 590.7 600.3C589.7 598.3 588.8 596.2 588.0 594.2C587.1 592.1 586.4 590.0 585.7 587.9C585.1 585.8 584.5 583.6 584.0 581.4C583.5 579.2 583.0 576.9 582.7 574.7C582.3 572.4 582.0 570.1 581.8 567.7C581.6 565.3 581.5 563.0 581.5 560.6C581.4 558.2 581.5 555.7 581.6 553.3C581.7 550.9 581.9 548.5 582.2 546.0C582.5 543.6 582.8 541.2 583.3 538.8C583.8 536.5 584.3 534.1 585.0 531.8C585.6 529.5 586.3 527.2 587.1 525.0C588.0 522.8 588.9 520.6 589.9 518.5C590.9 516.4 592.0 514.3 593.2 512.4C594.4 510.4 595.7 508.5 597.1 506.7C598.5 504.9 600.0 503.2 601.5 501.5C603.1 499.8 604.7 498.2 606.4 496.7C608.1 495.1 609.8 493.6 611.7 492.2C613.5 490.8 615.4 489.4 617.3 488.1C619.2 486.7 621.2 485.4 623.1 484.2C625.1 482.9 627.2 481.7 629.2 480.6C631.3 479.4 633.4 478.2 635.5 477.1C637.6 476.0 639.7 474.9 641.8 473.8C643.9 472.8 646.1 471.7 648.2 470.7C650.3 469.7 652.5 468.6 654.6 467.6C656.7 466.6 658.8 465.6 660.9 464.5C663.0 463.5 665.1 462.5 667.1 461.4C669.2 460.3 671.2 459.2 673.3 458.1C675.3 457.0 677.3 455.9 679.2 454.7C681.2 453.5 683.1 452.3 685.0 451.0C686.9 449.7 688.8 448.4 690.6 447.0C692.4 445.7 694.2 444.2 695.9 442.7C697.7 441.2 699.3 439.6 701.0 438.0C702.7 436.4 704.4 434.7 706.1 433.1C707.9 431.5 709.7 429.8 711.7 428.4C713.7 426.9 715.8 425.5 718.1 424.3C720.2 423.2 722.5 422.2 724.8 421.8C726.9 421.3 729.1 421.2 731.2 421.7C733.2 422.2 735.1 423.3 736.7 424.6C738.5 426.0 740.0 427.8 741.4 429.6C743.0 431.6 744.2 433.7 745.4 435.9C746.6 438.0 747.7 440.3 748.7 442.6C749.7 444.7 750.6 446.9 751.6 449.2C752.4 451.3 753.3 453.5 754.1 455.7C755.0 457.8 755.8 460.0 756.7 462.1C757.6 464.2 758.5 466.3 759.5 468.4C760.6 470.4 761.7 472.5 762.9 474.5C764.1 476.6 765.5 478.6 766.9 480.5C768.4 482.4 769.9 484.3 771.6 486.0C773.3 487.7 775.0 489.3 776.9 490.7C778.7 492.1 780.6 493.4 782.6 494.4C784.5 495.4 786.5 496.2 788.6 496.8C790.7 497.3 792.8 497.5 795.0 497.6C797.2 497.6 799.4 497.4 801.5 497.1C803.8 496.9 806.1 496.4 808.3 495.9C810.6 495.5 813.0 494.9 815.3 494.3C817.6 493.8 820.0 493.2 822.4 492.8C824.8 492.3 827.2 491.9 829.6 491.7C832.1 491.5 834.5 491.4 837.0 491.4C839.4 491.5 841.9 491.8 844.3 492.0C846.8 492.3 849.2 492.8 851.6 493.2C854.1 493.6 856.4 494.0 858.8 494.4C861.2 494.8 863.5 495.2 865.8 495.5C868.1 495.8 870.3 496.0 872.6 496.1C874.7 496.1 876.8 496.1 878.9 495.8C880.9 495.5 882.9 495.1 884.8 494.3C886.7 493.5 888.5 492.5 890.2 491.2C892.0 489.9 893.5 488.3 895.0 486.6C896.6 484.7 898.0 482.7 899.3 480.6C900.7 478.5 902.0 476.2 903.2 473.9C904.4 471.6 905.5 469.2 906.6 466.8C907.7 464.4 908.7 462.0 909.7 459.6C910.7 457.4 911.6 455.2 912.6 452.9C913.5 450.9 914.4 448.8 915.3 446.8C916.2 444.9 917.1 443.0 918.1 441.1C919.1 439.2 920.2 437.3 921.3 435.5C922.5 433.5 923.8 431.6 925.2 429.7C926.7 427.7 927.9 425.4 929.9 423.9C931.6 422.5 933.7 421.5 935.9 421.3C938.2 421.0 940.4 421.9 942.6 422.6C944.8 423.4 946.9 424.5 949.0 425.6C951.1 426.7 953.1 427.9 955.0 429.2C956.9 430.5 958.8 431.8 960.6 433.3C962.4 434.7 964.2 436.2 966.0 437.7C967.8 439.2 969.5 440.7 971.2 442.3C973.0 443.8 974.7 445.4 976.5 446.9C978.3 448.4 980.0 449.9 981.9 451.4C983.7 452.8 985.5 454.2 987.5 455.5C989.4 456.9 991.4 458.1 993.4 459.3C995.4 460.6 997.5 461.7 999.5 462.8C1001.6 463.9 1003.7 465.0 1005.9 466.0C1008.0 467.1 1010.2 468.1 1012.4 469.1C1014.5 470.1 1016.7 471.1 1018.9 472.0C1021.1 473.0 1023.2 474.0 1025.4 475.0C1027.6 476.0 1029.7 476.9 1031.9 478.0C1034.0 479.0 1036.1 480.0 1038.2 481.1C1040.2 482.2 1042.3 483.3 1044.3 484.5C1046.3 485.6 1048.2 486.8 1050.1 488.1C1052.0 489.4 1053.8 490.7 1055.6 492.1C1057.4 493.5 1059.1 495.0 1060.7 496.6C1062.3 498.1 1063.9 499.8 1065.3 501.5C1066.8 503.3 1068.2 505.1 1069.5 507.0C1070.8 508.9 1072.0 510.8 1073.2 512.8C1074.3 514.9 1075.4 517.0 1076.3 519.1C1077.3 521.2 1078.2 523.4 1079.0 525.6C1079.8 527.9 1080.6 530.2 1081.2 532.5C1081.8 534.8 1082.4 537.1 1082.9 539.5C1083.3 541.8 1083.7 544.2 1084.0 546.6C1084.3 549.0 1084.6 551.4 1084.7 553.9C1084.8 556.3 1084.9 558.7 1084.8 561.1C1084.8 563.5 1084.7 565.9 1084.5 568.4C1084.2 570.7 1083.9 573.1 1083.5 575.5C1083.2 577.8 1082.7 580.2 1082.1 582.5C1081.5 584.8 1080.9 587.0 1080.1 589.3C1079.4 591.5 1078.6 593.6 1077.6 595.8C1076.7 597.9 1075.7 599.9 1074.6 602.0C1073.5 604.0 1072.3 605.9 1071.1 607.9C1069.8 609.8 1068.5 611.7 1067.2 613.6C1065.8 615.5 1064.4 617.3 1063.0 619.1C1061.6 621.0 1060.2 622.8 1058.7 624.6C1057.3 626.5 1055.8 628.3 1054.4 630.1C1053.0 632.0 1051.5 633.8 1050.1 635.7C1048.7 637.5 1047.3 639.4 1046.0 641.4C1044.7 643.3 1043.4 645.2 1042.2 647.3C1040.9 649.3 1039.8 651.3 1038.7 653.4C1037.6 655.6 1036.6 657.7 1035.7 659.9C1034.8 662.1 1033.9 664.3 1033.2 666.6C1032.5 668.9 1031.9 671.1 1031.4 673.4C1030.9 675.7 1030.5 678.0 1030.2 680.3C1030.0 682.6 1029.8 684.9 1029.9 687.2C1029.9 689.5 1030.1 691.7 1030.4 694.0C1030.7 696.2 1031.2 698.4 1031.8 700.6C1032.4 702.8 1033.2 704.9 1034.0 707.0C1034.8 709.2 1035.8 711.3 1036.8 713.3C1037.8 715.5 1038.9 717.5 1040.0 719.6C1041.2 721.7 1042.4 723.8 1043.5 725.8C1044.7 727.9 1045.9 730.0 1047.0 732.1C1048.2 734.2 1049.3 736.3 1050.4 738.5C1051.5 740.6 1052.5 742.8 1053.5 745.0C1054.4 747.1 1055.3 749.4 1056.0 751.6C1056.8 753.9 1057.4 756.1 1057.9 758.5C1058.4 760.8 1058.8 763.1 1059.1 765.5C1059.4 767.9 1059.6 770.2 1059.7 772.6C1059.7 775.0 1059.7 777.4 1059.6 779.8C1059.5 782.2 1059.3 784.6 1059.0 786.9C1058.7 789.3 1058.3 791.6 1057.9 794.0C1057.4 796.3 1056.9 798.6 1056.3 800.8C1055.7 803.1 1055.0 805.3 1054.3 807.5C1053.5 809.7 1052.7 811.9 1051.9 814.0C1051.0 816.2 1050.0 818.3 1049.0 820.4C1048.0 822.5 1047.0 824.5 1045.9 826.6C1044.7 828.6 1043.6 830.6 1042.3 832.5C1041.1 834.5 1039.8 836.4 1038.5 838.3C1037.2 840.2 1035.8 842.1 1034.3 843.9C1032.9 845.8 1031.4 847.6 1029.9 849.4C1028.4 851.1 1026.8 852.9 1025.2 854.6C1023.6 856.3 1022.0 858.0 1020.3 859.6C1018.6 861.3 1016.9 862.9 1015.2 864.4C1013.5 866.0 1011.7 867.6 1009.9 869.1C1008.1 870.6 1006.3 872.1 1004.4 873.5C1002.6 874.9 1000.7 876.3 998.8 877.7C996.9 879.1 995.0 880.4 993.0 881.7C991.1 883.0 989.1 884.3 987.2 885.6C985.2 886.8 983.2 888.0 981.2 889.2C979.2 890.3 977.1 891.5 975.1 892.6C973.1 893.7 971.0 894.8 968.9 895.8C966.8 896.9 964.7 897.9 962.6 898.8C960.5 899.8 958.4 900.8 956.3 901.7C954.1 902.6 952.0 903.5 949.8 904.4C947.6 905.2 945.5 906.0 943.3 906.8C941.1 907.6 938.9 908.4 936.6 909.2C934.4 909.9 932.2 910.6 930.0 911.3C927.7 912.0 925.5 912.6 923.2 913.3C921.0 913.9 918.7 914.5 916.4 915.1C914.1 915.7 911.9 916.2 909.6 916.7C907.3 917.2 905.0 917.7 902.7 918.2C900.3 918.7 898.0 919.1 895.7 919.5C893.4 920.0 891.1 920.4 888.7 920.7C886.4 921.1 884.1 921.5 881.7 921.8C879.4 922.1 877.0 922.4 874.7 922.7C872.3 922.9 870.0 923.2 867.6 923.4C865.3 923.7 862.9 923.9 860.5 924.0C858.2 924.2 855.8 924.4 853.4 924.5C851.1 924.7 848.7 924.8 846.3 924.9C844.0 925.0 841.6 925.1 839.2 925.1C836.9 925.2 834.5 925.2 832.2 925.2Z"/>
<path id="p-nose" fill="#34271e" d="M832.4 898.4C830.0 898.4 827.7 898.4 825.3 898.5C823.0 898.5 820.7 898.5 818.4 898.6C816.1 898.6 813.8 898.7 811.5 898.7C809.3 898.7 807.0 898.7 804.7 898.6C802.4 898.6 800.1 898.6 797.9 898.4C795.6 898.3 793.3 898.2 791.0 898.0C788.7 897.7 786.4 897.5 784.1 897.1C781.7 896.8 779.4 896.4 777.1 895.9C774.7 895.4 772.3 894.8 770.0 894.1C767.7 893.4 765.4 892.7 763.1 891.8C760.9 890.9 758.7 890.0 756.5 888.9C754.4 887.8 752.4 886.7 750.5 885.3C748.6 884.1 746.8 882.7 745.1 881.1C743.5 879.6 741.9 877.9 740.6 876.1C739.2 874.4 738.1 872.5 737.0 870.5C736.0 868.5 735.1 866.4 734.4 864.3C733.6 862.2 733.1 860.0 732.6 857.7C732.2 855.5 731.9 853.2 731.8 850.9C731.6 848.6 731.6 846.2 731.8 843.9C731.9 841.6 732.2 839.2 732.7 836.9C733.1 834.6 733.6 832.3 734.3 830.0C734.9 827.7 735.7 825.4 736.5 823.2C737.3 820.9 738.3 818.7 739.2 816.5C740.2 814.3 741.2 812.1 742.3 809.9C743.3 807.8 744.4 805.7 745.5 803.6C746.7 801.5 747.8 799.5 749.0 797.5C750.3 795.5 751.5 793.5 752.8 791.6C754.1 789.7 755.5 787.8 756.9 786.0C758.3 784.2 759.8 782.4 761.3 780.7C762.9 779.0 764.5 777.3 766.1 775.7C767.8 774.2 769.5 772.6 771.3 771.2C773.1 769.7 774.9 768.3 776.8 766.9C778.8 765.6 780.7 764.3 782.7 763.1C784.7 761.9 786.8 760.8 788.9 759.7C791.0 758.6 793.2 757.7 795.3 756.7C797.5 755.8 799.7 755.0 802.0 754.2C804.2 753.5 806.5 752.8 808.7 752.2C811.0 751.6 813.3 751.1 815.6 750.7C818.0 750.2 820.3 749.9 822.6 749.6C824.9 749.4 827.3 749.2 829.6 749.1C832.0 749.0 834.3 749.1 836.6 749.2C838.9 749.3 841.2 749.5 843.5 749.8C845.8 750.0 848.1 750.4 850.4 750.9C852.7 751.3 854.9 751.9 857.2 752.5C859.4 753.1 861.6 753.8 863.8 754.6C866.0 755.4 868.2 756.2 870.3 757.2C872.4 758.1 874.5 759.1 876.6 760.2C878.7 761.2 880.7 762.4 882.7 763.6C884.7 764.8 886.7 766.1 888.6 767.4C890.5 768.8 892.4 770.2 894.2 771.6C896.1 773.1 897.9 774.6 899.6 776.2C901.4 777.7 903.0 779.4 904.7 781.1C906.3 782.7 907.9 784.5 909.4 786.3C911.0 788.0 912.4 789.9 913.8 791.8C915.2 793.6 916.6 795.6 917.9 797.5C919.1 799.5 920.3 801.5 921.5 803.5C922.6 805.6 923.7 807.6 924.7 809.8C925.7 811.9 926.6 814.0 927.5 816.2C928.3 818.4 929.1 820.6 929.7 822.8C930.4 825.1 931.0 827.3 931.5 829.6C932.0 831.9 932.5 834.2 932.8 836.6C933.1 838.9 933.4 841.2 933.5 843.6C933.7 846.0 933.7 848.3 933.6 850.7C933.6 853.0 933.4 855.4 933.0 857.7C932.6 859.9 932.2 862.2 931.4 864.4C930.8 866.5 929.9 868.6 928.8 870.6C927.8 872.5 926.5 874.4 925.1 876.2C923.8 877.9 922.2 879.6 920.6 881.1C918.9 882.7 917.1 884.1 915.2 885.4C913.4 886.8 911.4 888.0 909.4 889.1C907.4 890.2 905.3 891.2 903.2 892.0C901.1 892.9 898.9 893.6 896.7 894.3C894.5 895.0 892.2 895.5 890.0 896.0C887.7 896.5 885.3 896.9 883.0 897.2C880.7 897.5 878.3 897.8 875.9 898.0C873.5 898.2 871.1 898.3 868.7 898.5C866.3 898.6 863.9 898.6 861.4 898.6C859.0 898.7 856.6 898.7 854.1 898.7C851.7 898.6 849.2 898.6 846.8 898.6C844.4 898.5 842.0 898.5 839.5 898.5C837.2 898.4 834.8 898.4 832.4 898.4Z"/>
<path id="p-muz" fill="#775a44" d="M834.7 616.7C833.4 614.5 832.4 612.1 830.7 610.2C829.2 608.5 827.4 607.2 825.5 606.1C823.6 605.1 821.5 604.4 819.4 603.9C817.3 603.4 815.1 603.2 812.9 603.1C810.6 602.9 808.4 602.9 806.1 603.0C803.9 603.0 801.6 603.2 799.4 603.4C797.1 603.6 794.9 603.9 792.6 604.3C790.4 604.6 788.1 605.0 785.9 605.5C783.7 606.0 781.4 606.6 779.2 607.2C776.9 607.8 774.7 608.4 772.5 609.1C770.2 609.8 768.0 610.6 765.8 611.4C763.6 612.2 761.4 613.0 759.2 613.9C756.9 614.8 754.7 615.7 752.5 616.7C750.3 617.6 748.1 618.6 745.9 619.6C743.8 620.6 741.6 621.7 739.4 622.7C737.2 623.8 735.1 624.9 732.9 626.0C730.7 627.0 728.6 628.2 726.5 629.3C724.3 630.4 722.2 631.6 720.1 632.7C718.0 633.9 715.9 635.1 713.8 636.3C711.8 637.5 709.7 638.7 707.7 640.0C705.6 641.2 703.6 642.5 701.6 643.8C699.7 645.1 697.7 646.4 695.8 647.8C693.9 649.1 692.0 650.5 690.1 651.9C688.2 653.3 686.4 654.7 684.6 656.2C682.8 657.6 681.0 659.1 679.3 660.7C677.6 662.2 675.9 663.7 674.3 665.3C672.7 666.9 671.1 668.5 669.5 670.2C668.0 671.8 666.5 673.5 665.0 675.2C663.6 676.9 662.2 678.7 660.8 680.5C659.5 682.3 658.2 684.1 657.0 686.0C655.7 687.8 654.5 689.7 653.4 691.7C652.3 693.6 651.3 695.6 650.3 697.6C649.3 699.7 648.3 701.8 647.5 703.9C646.6 706.0 645.8 708.1 645.1 710.3C644.4 712.5 643.7 714.7 643.1 717.0C642.5 719.2 641.9 721.5 641.4 723.8C640.9 726.1 640.5 728.5 640.1 730.8C639.8 733.2 639.5 735.5 639.2 737.9C639.0 740.3 638.8 742.7 638.6 745.1C638.5 747.5 638.4 750.0 638.4 752.4C638.3 754.8 638.4 757.3 638.4 759.7C638.5 762.1 638.7 764.6 638.8 767.0C639.0 769.4 639.3 771.9 639.5 774.3C639.8 776.7 640.2 779.1 640.6 781.5C640.9 783.9 641.4 786.3 641.9 788.7C642.4 791.0 642.9 793.4 643.5 795.7C644.2 798.0 644.8 800.2 645.6 802.5C646.4 804.7 647.2 806.8 648.1 809.0C649.0 811.0 650.0 813.1 651.1 815.1C652.2 817.0 653.4 819.0 654.7 820.8C656.0 822.6 657.4 824.4 658.9 826.0C660.4 827.7 662.0 829.2 663.7 830.7C665.5 832.1 667.3 833.5 669.2 834.7C671.2 835.9 673.2 837.0 675.3 837.9C677.4 838.9 679.6 839.6 681.8 840.2C684.0 840.8 686.3 841.1 688.6 841.3C690.9 841.4 693.2 841.4 695.5 841.1C697.8 840.9 700.1 840.4 702.3 839.8C704.6 839.2 706.8 838.5 709.0 837.6C711.2 836.7 713.3 835.6 715.4 834.5C717.4 833.3 719.4 832.1 721.4 830.7C723.3 829.4 725.2 827.9 727.0 826.4C728.9 824.9 730.7 823.3 732.4 821.7C734.2 820.0 735.9 818.3 737.5 816.6C739.2 814.9 740.8 813.1 742.5 811.4C744.1 809.6 745.7 807.8 747.3 806.1C748.8 804.3 750.4 802.5 751.9 800.7C753.5 799.0 755.0 797.2 756.6 795.5C758.2 793.7 759.7 792.0 761.3 790.3C762.8 788.6 764.4 786.9 766.0 785.3C767.6 783.6 769.2 782.0 770.9 780.4C772.5 778.8 774.2 777.3 775.9 775.8C777.7 774.3 779.4 772.9 781.2 771.5C783.0 770.2 784.9 768.8 786.8 767.6C788.7 766.3 790.7 765.1 792.7 764.1C794.8 762.9 796.9 761.9 799.0 761.0C801.2 760.0 803.5 759.1 805.7 758.2C807.9 757.3 810.1 756.4 812.3 755.4C814.4 754.5 816.6 753.5 818.6 752.3C820.6 751.2 822.5 750.0 824.3 748.5C826.0 747.1 827.7 745.5 829.1 743.7C830.5 741.8 831.4 739.6 832.6 737.5C833.9 739.5 835.0 741.7 836.4 743.5C837.8 745.3 839.4 747.0 841.2 748.5C842.9 750.0 844.7 751.3 846.6 752.5C848.6 753.8 850.6 754.9 852.7 755.9C854.8 757.0 856.9 757.9 859.1 758.9C861.3 759.9 863.5 760.7 865.7 761.7C867.9 762.6 870.1 763.5 872.3 764.5C874.4 765.5 876.6 766.5 878.7 767.6C880.8 768.7 882.8 769.8 884.8 771.1C886.7 772.4 888.6 773.9 890.3 775.4C892.1 776.9 893.8 778.5 895.4 780.2C897.1 781.9 898.6 783.6 900.2 785.4C901.7 787.2 903.2 789.0 904.7 790.9C906.2 792.7 907.7 794.5 909.1 796.4C910.6 798.2 912.1 800.0 913.6 801.8C915.0 803.6 916.5 805.3 918.1 807.1C919.6 808.8 921.2 810.5 922.8 812.2C924.4 813.9 926.0 815.5 927.7 817.1C929.4 818.8 931.2 820.4 933.0 821.9C934.8 823.5 936.7 825.1 938.7 826.6C940.6 828.1 942.6 829.6 944.7 830.9C946.8 832.3 948.9 833.6 951.1 834.8C953.2 836.0 955.4 837.1 957.7 838.0C959.9 838.9 962.1 839.8 964.4 840.4C966.6 841.0 968.9 841.4 971.1 841.6C973.4 841.8 975.6 841.8 977.9 841.6C980.1 841.3 982.3 840.8 984.4 840.1C986.6 839.4 988.7 838.5 990.7 837.4C992.8 836.4 994.8 835.1 996.7 833.8C998.6 832.4 1000.4 831.0 1002.1 829.4C1003.8 827.9 1005.4 826.2 1006.9 824.5C1008.4 822.8 1009.9 821.0 1011.2 819.2C1012.5 817.3 1013.8 815.4 1014.9 813.4C1016.1 811.4 1017.1 809.4 1018.1 807.3C1019.1 805.2 1020.0 803.0 1020.8 800.9C1021.6 798.7 1022.4 796.4 1023.0 794.1C1023.7 791.9 1024.3 789.5 1024.8 787.2C1025.3 784.9 1025.8 782.5 1026.1 780.1C1026.5 777.7 1026.8 775.3 1027.1 772.9C1027.3 770.5 1027.5 768.0 1027.6 765.6C1027.7 763.2 1027.8 760.7 1027.8 758.3C1027.8 755.9 1027.7 753.4 1027.6 751.0C1027.5 748.6 1027.3 746.2 1027.1 743.8C1026.9 741.4 1026.6 739.0 1026.2 736.6C1025.9 734.2 1025.5 731.8 1025.0 729.5C1024.6 727.1 1024.1 724.8 1023.5 722.5C1022.9 720.2 1022.3 717.9 1021.6 715.6C1021.0 713.3 1020.2 711.1 1019.4 708.9C1018.6 706.7 1017.8 704.5 1016.9 702.3C1016.0 700.1 1015.1 698.0 1014.1 695.9C1013.1 693.8 1012.0 691.8 1010.9 689.7C1009.8 687.7 1008.6 685.7 1007.4 683.8C1006.2 681.8 1004.9 679.9 1003.6 678.0C1002.3 676.2 1000.9 674.4 999.5 672.6C998.0 670.8 996.6 669.1 995.0 667.4C993.5 665.8 991.9 664.1 990.3 662.6C988.7 661.0 987.0 659.5 985.3 658.0C983.5 656.5 981.8 655.0 980.0 653.6C978.2 652.2 976.3 650.9 974.4 649.6C972.6 648.2 970.6 646.9 968.7 645.7C966.7 644.4 964.7 643.2 962.7 642.0C960.7 640.8 958.6 639.7 956.6 638.5C954.5 637.4 952.4 636.3 950.3 635.2C948.1 634.1 946.0 633.0 943.8 631.9C941.6 630.9 939.5 629.8 937.3 628.8C935.0 627.8 932.8 626.8 930.6 625.8C928.4 624.7 926.1 623.7 923.9 622.8C921.6 621.8 919.3 620.8 917.1 619.8C914.8 618.8 912.5 617.8 910.2 616.8C908.0 615.9 905.7 614.9 903.4 613.9C901.1 612.9 898.9 611.9 896.6 611.0C894.3 610.1 892.1 609.1 889.8 608.3C887.5 607.4 885.3 606.6 883.0 605.9C880.8 605.2 878.6 604.6 876.3 604.0C874.1 603.5 871.9 603.0 869.7 602.7C867.5 602.4 865.4 602.2 863.2 602.2C861.0 602.1 858.9 602.2 856.8 602.5C854.7 602.8 852.6 603.2 850.5 603.8C848.4 604.5 846.4 605.3 844.5 606.4C842.5 607.5 840.6 608.9 839.1 610.5C837.3 612.4 836.2 614.6 834.7 616.7Z"/>
</g>
</g>
<use href="#p-muz" style="fill:none" fill="none" stroke="#2f8ef8" stroke-width="1.1"/>
<rect x="638.5" y="601.5" width="389.0" height="241.0" fill="none" stroke="#2f8ef8" stroke-width="1"/>
<rect x="635.0" y="598.0" width="7" height="7" fill="#2f8ef8"/>
<rect x="829.5" y="598.0" width="7" height="7" fill="#2f8ef8"/>
<rect x="1024.0" y="598.0" width="7" height="7" fill="#2f8ef8"/>
<rect x="635.0" y="718.5" width="7" height="7" fill="#2f8ef8"/>
<rect x="1024.0" y="718.5" width="7" height="7" fill="#2f8ef8"/>
<rect x="635.0" y="839.0" width="7" height="7" fill="#2f8ef8"/>
<rect x="829.5" y="839.0" width="7" height="7" fill="#2f8ef8"/>
<rect x="1024.0" y="839.0" width="7" height="7" fill="#2f8ef8"/>
</svg>
<div class="a" style="left:778px;top:1339px;width:502px;height:9px;border-radius:5px;background:#5b5b5b"></div>
<div class="a" style="left:1608px;top:709px;width:9px;height:329px;border-radius:5px;background:#5b5b5b"></div>
<div class="a" id="top"></div><div class="a" id="topline"></div>
<div class="a" id="left"></div><div class="a" id="lefthead"></div>
<div class="a" id="hr">
<div class="rl" style="left:39.4px;top:2.8px">-300</div>
<div class="rl" style="left:99.5px;top:2.8px">-200</div>
<div class="rl" style="left:159.6px;top:2.8px">-100</div>
<div class="rl" style="left:219.7px;top:2.8px">0</div>
<div class="rl" style="left:279.8px;top:2.8px">100</div>
<div class="rl" style="left:339.8px;top:2.8px">200</div>
<div class="rl" style="left:399.9px;top:2.8px">300</div>
<div class="rl" style="left:460.0px;top:2.8px">400</div>
<div class="rl" style="left:520.1px;top:2.8px">500</div>
<div class="rl" style="left:580.2px;top:2.8px">600</div>
<div class="rl" style="left:640.2px;top:2.8px">700</div>
<div class="rl" style="left:700.3px;top:2.8px">800</div>
<div class="rl" style="left:760.4px;top:2.8px">900</div>
<div class="rl" style="left:820.5px;top:2.8px">1000</div>
<div class="rl" style="left:880.6px;top:2.8px">1100</div>
<div class="rl" style="left:940.6px;top:2.8px">1200</div>
<div class="rl" style="left:1000.7px;top:2.8px">1300</div>
<div class="rl" style="left:1060.8px;top:2.8px">1400</div>
<div class="rl" style="left:1120.9px;top:2.8px">1500</div>
<div class="rl" style="left:1181.0px;top:2.8px">1600</div>
<div class="rl" style="left:1241.0px;top:2.8px">1700</div>
<div class="rl" style="left:1301.1px;top:2.8px">1800</div>
<div class="rl" style="left:1361.2px;top:2.8px">1900</div>
<div class="rl" style="left:1421.3px;top:2.8px">2000</div>
<div class="rl" style="left:1481.4px;top:2.8px">2100</div>
<div class="rl" style="left:1541.4px;top:2.8px">2200</div>
</div>
<div class="a" id="vr">
<div class="vl" style="left:2.2px;top:50.8px;width:40px;text-align:right;">-100</div>
<div class="vl" style="left:2.2px;top:110.8px;width:40px;text-align:right;">0</div>
<div class="vl" style="left:2.2px;top:170.9px;width:40px;text-align:right;">100</div>
<div class="vl" style="left:2.2px;top:230.9px;width:40px;text-align:right;">200</div>
<div class="vl" style="left:2.2px;top:291.0px;width:40px;text-align:right;">300</div>
<div class="vl" style="left:2.2px;top:351.0px;width:40px;text-align:right;">400</div>
<div class="vl" style="left:2.2px;top:411.1px;width:40px;text-align:right;">500</div>
<div class="vl" style="left:2.2px;top:471.1px;width:40px;text-align:right;">600</div>
<div class="vl" style="left:2.2px;top:531.2px;width:40px;text-align:right;">700</div>
<div class="vl" style="left:2.2px;top:591.2px;width:40px;text-align:right;">800</div>
<div class="vl" style="left:2.2px;top:651.3px;width:40px;text-align:right;">900</div>
<div class="vl" style="left:2.2px;top:711.3px;width:40px;text-align:right;">1000</div>
<div class="vl" style="left:2.2px;top:771.4px;width:40px;text-align:right;">1100</div>
<div class="vl" style="left:2.2px;top:831.4px;width:40px;text-align:right;">1200</div>
<div class="vl" style="left:2.2px;top:891.5px;width:40px;text-align:right;">1300</div>
<div class="vl" style="left:2.2px;top:951.5px;width:40px;text-align:right;">1400</div>
<div class="vl" style="left:2.2px;top:1011.6px;width:40px;text-align:right;">1500</div>
<div class="vl" style="left:2.2px;top:1071.6px;width:40px;text-align:right;">1600</div>
<div class="vl" style="left:2.2px;top:1131.7px;width:40px;text-align:right;">1700</div>
<div class="vl" style="left:2.2px;top:1191.7px;width:40px;text-align:right;">1800</div>
<div class="vl" style="left:2.2px;top:1251.8px;width:40px;text-align:right;">1900</div>
<div class="vl" style="left:2.2px;top:1311.8px;width:40px;text-align:right;">2000</div>
</div>
<div class="a" id="corner"></div>
<div class="rl" style="left:50.8px;top:83.2px;font-size:11.5px;letter-spacing:0.3px">px</div>
<div class="a" id="panel"></div><div class="a" id="pborder"></div>
<svg width="1920" height="1350" viewBox="0 0 1920 1350">
<path d="M71.42 93.5V97.3M77.43 93.5V97.3M83.44 84.9V97.3M89.45 93.5V97.3M95.46 93.5V97.3M101.46 93.5V97.3M107.47 93.5V97.3M113.48 93.5V97.3M119.49 93.5V97.3M125.50 93.5V97.3M131.50 93.5V97.3M137.51 93.5V97.3M143.52 84.9V97.3M149.53 93.5V97.3M155.54 93.5V97.3M161.54 93.5V97.3M167.55 93.5V97.3M173.56 93.5V97.3M179.57 93.5V97.3M185.58 93.5V97.3M191.58 93.5V97.3M197.59 93.5V97.3M203.60 84.9V97.3M209.61 93.5V97.3M215.62 93.5V97.3M221.62 93.5V97.3M227.63 93.5V97.3M233.64 93.5V97.3M239.65 93.5V97.3M245.66 93.5V97.3M251.66 93.5V97.3M257.67 93.5V97.3M263.68 84.9V97.3M269.69 93.5V97.3M275.70 93.5V97.3M281.70 93.5V97.3M287.71 93.5V97.3M293.72 93.5V97.3M299.73 93.5V97.3M305.74 93.5V97.3M311.74 93.5V97.3M317.75 93.5V97.3M323.76 84.9V97.3M329.77 93.5V97.3M335.78 93.5V97.3M341.78 93.5V97.3M347.79 93.5V97.3M353.80 93.5V97.3M359.81 93.5V97.3M365.82 93.5V97.3M371.82 93.5V97.3M377.83 93.5V97.3M383.84 84.9V97.3M389.85 93.5V97.3M395.86 93.5V97.3M401.86 93.5V97.3M407.87 93.5V97.3M413.88 93.5V97.3M419.89 93.5V97.3M425.90 93.5V97.3M431.90 93.5V97.3M437.91 93.5V97.3M443.92 84.9V97.3M449.93 93.5V97.3M455.94 93.5V97.3M461.94 93.5V97.3M467.95 93.5V97.3M473.96 93.5V97.3M479.97 93.5V97.3M485.98 93.5V97.3M491.98 93.5V97.3M497.99 93.5V97.3M504.00 84.9V97.3M510.01 93.5V97.3M516.02 93.5V97.3M522.02 93.5V97.3M528.03 93.5V97.3M534.04 93.5V97.3M540.05 93.5V97.3M546.06 93.5V97.3M552.06 93.5V97.3M558.07 93.5V97.3M564.08 84.9V97.3M570.09 93.5V97.3M576.10 93.5V97.3M582.10 93.5V97.3M588.11 93.5V97.3M594.12 93.5V97.3M600.13 93.5V97.3M606.14 93.5V97.3M612.14 93.5V97.3M618.15 93.5V97.3M624.16 84.9V97.3M630.17 93.5V97.3M636.18 93.5V97.3M642.18 93.5V97.3M648.19 93.5V97.3M654.20 93.5V97.3M660.21 93.5V97.3M666.22 93.5V97.3M672.22 93.5V97.3M678.23 93.5V97.3M684.24 84.9V97.3M690.25 93.5V97.3M696.26 93.5V97.3M702.26 93.5V97.3M708.27 93.5V97.3M714.28 93.5V97.3M720.29 93.5V97.3M726.30 93.5V97.3M732.30 93.5V97.3M738.31 93.5V97.3M744.32 84.9V97.3M750.33 93.5V97.3M756.34 93.5V97.3M762.34 93.5V97.3M768.35 93.5V97.3M774.36 93.5V97.3M780.37 93.5V97.3M786.38 93.5V97.3M792.38 93.5V97.3M798.39 93.5V97.3M804.40 84.9V97.3M810.41 93.5V97.3M816.42 93.5V97.3M822.42 93.5V97.3M828.43 93.5V97.3M834.44 93.5V97.3M840.45 93.5V97.3M846.46 93.5V97.3M852.46 93.5V97.3M858.47 93.5V97.3M864.48 84.9V97.3M870.49 93.5V97.3M876.50 93.5V97.3M882.50 93.5V97.3M888.51 93.5V97.3M894.52 93.5V97.3M900.53 93.5V97.3M906.54 93.5V97.3M912.54 93.5V97.3M918.55 93.5V97.3M924.56 84.9V97.3M930.57 93.5V97.3M936.58 93.5V97.3M942.58 93.5V97.3M948.59 93.5V97.3M954.60 93.5V97.3M960.61 93.5V97.3M966.62 93.5V97.3M972.62 93.5V97.3M978.63 93.5V97.3M984.64 84.9V97.3M990.65 93.5V97.3M996.66 93.5V97.3M1002.66 93.5V97.3M1008.67 93.5V97.3M1014.68 93.5V97.3M1020.69 93.5V97.3M1026.70 93.5V97.3M1032.70 93.5V97.3M1038.71 93.5V97.3M1044.72 84.9V97.3M1050.73 93.5V97.3M1056.74 93.5V97.3M1062.74 93.5V97.3M1068.75 93.5V97.3M1074.76 93.5V97.3M1080.77 93.5V97.3M1086.78 93.5V97.3M1092.78 93.5V97.3M1098.79 93.5V97.3M1104.80 84.9V97.3M1110.81 93.5V97.3M1116.82 93.5V97.3M1122.82 93.5V97.3M1128.83 93.5V97.3M1134.84 93.5V97.3M1140.85 93.5V97.3M1146.86 93.5V97.3M1152.86 93.5V97.3M1158.87 93.5V97.3M1164.88 84.9V97.3M1170.89 93.5V97.3M1176.90 93.5V97.3M1182.90 93.5V97.3M1188.91 93.5V97.3M1194.92 93.5V97.3M1200.93 93.5V97.3M1206.94 93.5V97.3M1212.94 93.5V97.3M1218.95 93.5V97.3M1224.96 84.9V97.3M1230.97 93.5V97.3M1236.98 93.5V97.3M1242.98 93.5V97.3M1248.99 93.5V97.3M1255.00 93.5V97.3M1261.01 93.5V97.3M1267.02 93.5V97.3M1273.02 93.5V97.3M1279.03 93.5V97.3M1285.04 84.9V97.3M1291.05 93.5V97.3M1297.06 93.5V97.3M1303.06 93.5V97.3M1309.07 93.5V97.3M1315.08 93.5V97.3M1321.09 93.5V97.3M1327.10 93.5V97.3M1333.10 93.5V97.3M1339.11 93.5V97.3M1345.12 84.9V97.3M1351.13 93.5V97.3M1357.14 93.5V97.3M1363.14 93.5V97.3M1369.15 93.5V97.3M1375.16 93.5V97.3M1381.17 93.5V97.3M1387.18 93.5V97.3M1393.18 93.5V97.3M1399.19 93.5V97.3M1405.20 84.9V97.3M1411.21 93.5V97.3M1417.22 93.5V97.3M1423.22 93.5V97.3M1429.23 93.5V97.3M1435.24 93.5V97.3M1441.25 93.5V97.3M1447.26 93.5V97.3M1453.26 93.5V97.3M1459.27 93.5V97.3M1465.28 84.9V97.3M1471.29 93.5V97.3M1477.30 93.5V97.3M1483.30 93.5V97.3M1489.31 93.5V97.3M1495.32 93.5V97.3M1501.33 93.5V97.3M1507.34 93.5V97.3M1513.34 93.5V97.3M1519.35 93.5V97.3M1525.36 84.9V97.3M1531.37 93.5V97.3M1537.38 93.5V97.3M1543.38 93.5V97.3M1549.39 93.5V97.3M1555.40 93.5V97.3M1561.41 93.5V97.3M1567.42 93.5V97.3M1573.42 93.5V97.3M1579.43 93.5V97.3M1585.44 84.9V97.3M1591.45 93.5V97.3M1597.46 93.5V97.3M1603.46 93.5V97.3M1609.47 93.5V97.3M1615.48 93.5V97.3M64.9 97.90H68.9M64.9 103.91H68.9M64.9 109.91H68.9M64.9 115.91H68.9M64.9 121.92H68.9M64.9 127.92H68.9M64.9 133.93H68.9M64.9 139.94H68.9M56.2 145.94H68.9M64.9 151.94H68.9M64.9 157.95H68.9M64.9 163.95H68.9M64.9 169.96H68.9M64.9 175.97H68.9M64.9 181.97H68.9M64.9 187.97H68.9M64.9 193.98H68.9M64.9 199.99H68.9M56.2 205.99H68.9M64.9 212.00H68.9M64.9 218.00H68.9M64.9 224.00H68.9M64.9 230.01H68.9M64.9 236.01H68.9M64.9 242.02H68.9M64.9 248.02H68.9M64.9 254.03H68.9M64.9 260.03H68.9M56.2 266.04H68.9M64.9 272.05H68.9M64.9 278.05H68.9M64.9 284.06H68.9M64.9 290.06H68.9M64.9 296.06H68.9M64.9 302.07H68.9M64.9 308.07H68.9M64.9 314.08H68.9M64.9 320.09H68.9M56.2 326.09H68.9M64.9 332.10H68.9M64.9 338.10H68.9M64.9 344.11H68.9M64.9 350.11H68.9M64.9 356.12H68.9M64.9 362.12H68.9M64.9 368.12H68.9M64.9 374.13H68.9M64.9 380.13H68.9M56.2 386.14H68.9M64.9 392.14H68.9M64.9 398.15H68.9M64.9 404.15H68.9M64.9 410.16H68.9M64.9 416.17H68.9M64.9 422.17H68.9M64.9 428.18H68.9M64.9 434.18H68.9M64.9 440.19H68.9M56.2 446.19H68.9M64.9 452.19H68.9M64.9 458.20H68.9M64.9 464.20H68.9M64.9 470.21H68.9M64.9 476.21H68.9M64.9 482.22H68.9M64.9 488.22H68.9M64.9 494.23H68.9M64.9 500.24H68.9M56.2 506.24H68.9M64.9 512.25H68.9M64.9 518.25H68.9M64.9 524.25H68.9M64.9 530.26H68.9M64.9 536.26H68.9M64.9 542.27H68.9M64.9 548.27H68.9M64.9 554.28H68.9M64.9 560.28H68.9M56.2 566.29H68.9M64.9 572.30H68.9M64.9 578.30H68.9M64.9 584.31H68.9M64.9 590.31H68.9M64.9 596.32H68.9M64.9 602.32H68.9M64.9 608.33H68.9M64.9 614.33H68.9M64.9 620.34H68.9M56.2 626.34H68.9M64.9 632.35H68.9M64.9 638.35H68.9M64.9 644.36H68.9M64.9 650.36H68.9M64.9 656.37H68.9M64.9 662.37H68.9M64.9 668.38H68.9M64.9 674.38H68.9M64.9 680.38H68.9M56.2 686.39H68.9M64.9 692.39H68.9M64.9 698.40H68.9M64.9 704.40H68.9M64.9 710.41H68.9M64.9 716.41H68.9M64.9 722.42H68.9M64.9 728.42H68.9M64.9 734.43H68.9M64.9 740.43H68.9M56.2 746.44H68.9M64.9 752.44H68.9M64.9 758.45H68.9M64.9 764.45H68.9M64.9 770.46H68.9M64.9 776.46H68.9M64.9 782.47H68.9M64.9 788.47H68.9M64.9 794.48H68.9M64.9 800.48H68.9M56.2 806.49H68.9M64.9 812.49H68.9M64.9 818.50H68.9M64.9 824.50H68.9M64.9 830.51H68.9M64.9 836.51H68.9M64.9 842.52H68.9M64.9 848.53H68.9M64.9 854.53H68.9M64.9 860.54H68.9M56.2 866.54H68.9M64.9 872.55H68.9M64.9 878.55H68.9M64.9 884.56H68.9M64.9 890.56H68.9M64.9 896.57H68.9M64.9 902.57H68.9M64.9 908.58H68.9M64.9 914.58H68.9M64.9 920.59H68.9M56.2 926.59H68.9M64.9 932.60H68.9M64.9 938.60H68.9M64.9 944.61H68.9M64.9 950.61H68.9M64.9 956.62H68.9M64.9 962.62H68.9M64.9 968.62H68.9M64.9 974.63H68.9M64.9 980.63H68.9M56.2 986.64H68.9M64.9 992.64H68.9M64.9 998.65H68.9M64.9 1004.65H68.9M64.9 1010.66H68.9M64.9 1016.66H68.9M64.9 1022.67H68.9M64.9 1028.67H68.9M64.9 1034.68H68.9M64.9 1040.68H68.9M56.2 1046.69H68.9M64.9 1052.69H68.9M64.9 1058.70H68.9M64.9 1064.70H68.9M64.9 1070.71H68.9M64.9 1076.71H68.9M64.9 1082.72H68.9M64.9 1088.72H68.9M64.9 1094.73H68.9M64.9 1100.73H68.9M56.2 1106.74H68.9M64.9 1112.74H68.9M64.9 1118.75H68.9M64.9 1124.75H68.9M64.9 1130.76H68.9M64.9 1136.76H68.9M64.9 1142.77H68.9M64.9 1148.78H68.9M64.9 1154.78H68.9M64.9 1160.79H68.9M56.2 1166.79H68.9M64.9 1172.80H68.9M64.9 1178.80H68.9M64.9 1184.81H68.9M64.9 1190.81H68.9M64.9 1196.82H68.9M64.9 1202.82H68.9M64.9 1208.83H68.9M64.9 1214.83H68.9M64.9 1220.84H68.9M56.2 1226.84H68.9M64.9 1232.85H68.9M64.9 1238.85H68.9M64.9 1244.86H68.9M64.9 1250.86H68.9M64.9 1256.87H68.9M64.9 1262.87H68.9M64.9 1268.88H68.9M64.9 1274.88H68.9M64.9 1280.88H68.9M56.2 1286.89H68.9M64.9 1292.89H68.9M64.9 1298.90H68.9M64.9 1304.90H68.9M64.9 1310.91H68.9M64.9 1316.91H68.9M64.9 1322.92H68.9M64.9 1328.92H68.9M64.9 1334.93H68.9M64.9 1340.93H68.9M56.2 1346.94H68.9" stroke="#9e9e9e" stroke-width="1.45" fill="none"/>
<path d="M68.3 78V96.6H49" stroke="#a0a0a0" stroke-width="1" fill="none"/>
<path d="M8.2 85.8L12.6 90L17 85.8" stroke="#d6d6d6" stroke-width="1.3" fill="none"/>
<path d="M153.3 40.5V62.5M228.3 40.5V62.5M1742.7 40.3V64.4" stroke="#383838" stroke-width="1.2"/>
<circle cx="16.9" cy="13.2" r="7.2" fill="#fe5f57"/><circle cx="16.9" cy="13.2" r="2.3" fill="#8c0a04"/>
<circle cx="40.9" cy="13.2" r="7.2" fill="#e8b92a"/>
<circle cx="64.9" cy="13.2" r="7.2" fill="#3fbf2e"/>
<g transform="translate(24.00 116.00)" ><path d="M-6 -10.8L9.2 3.3L0.3 4.9L-6 10.4Z" fill="#2f8fff"/></g><g transform="translate(24.00 154.40)" ><path d="M-5.4 -9.2L7.9 3.2L0.3 4.5L-5.4 9.3Z" fill="#6a6a6a" stroke="#d6d6d6" stroke-width="1.3" stroke-linejoin="miter"/></g><g transform="translate(24.00 192.80)" ><ellipse cx="0" cy="-3" rx="11.5" ry="8" fill="#4a4a4a" stroke="#d6d6d6" stroke-width="1.4"/><circle cx="-5" cy="4.3" r="1.6" fill="#434343" stroke="#d6d6d6" stroke-width="1.2"/><path d="M-5 6C-4.5 8.5 -5.5 10.5 -8 11.2" fill="none" stroke="#d6d6d6" stroke-width="1.3"/></g><g transform="translate(24.00 231.20)" ><g transform="rotate(45)"><path d="M-4.2 -13.5H4.2V-7.5H-4.2Z" fill="#d6d6d6"/><path d="M-4.4 -6.6H4.4C6.6 -3.4 7 1 5 5L0 15.2L-5 5C-7 1 -6.6 -3.4 -4.4 -6.6Z" fill="#6a6a6a" stroke="#d6d6d6" stroke-width="1.3" stroke-linejoin="round"/><path d="M0 15V3" stroke="#d6d6d6" stroke-width="1.1"/><circle cx="0" cy="2.2" r="1.7" fill="#d6d6d6"/></g></g><g transform="translate(24.00 269.60)" ><g transform="rotate(45)"><path d="M-4.5 -14H4.5V-2.5H-4.5Z" fill="#d6d6d6"/><path d="M-4.5 -1.2H4.5L3.4 8.5L0.9 12.2H-0.9L-3.4 8.5Z" fill="#d6d6d6"/><rect x="-0.9" y="13.3" width="1.8" height="1.8" fill="#d6d6d6"/></g></g><g transform="translate(24.00 308.00)" ><path d="M10.8 -10.6C2 -9.8 -6 -6.5 -8.5 -1C-10 2.5 -10.5 6.5 -10.8 10.2C-3 9.6 3 6.5 6.8 2.5C9.5 -1.5 10.5 -6 10.8 -10.6Z" fill="#6a6a6a" stroke="#d6d6d6" stroke-width="1.2" stroke-linejoin="round"/><path d="M-4.8 -5.2L4.8 4.5" stroke="#d6d6d6" stroke-width="1.2"/><circle cx="-4.9" cy="-5.1" r="1.7" fill="#555" stroke="#d6d6d6" stroke-width="1.1"/><circle cx="4.9" cy="4.6" r="1.7" fill="#555" stroke="#d6d6d6" stroke-width="1.1"/><circle cx="0" cy="-0.3" r="2.3" fill="#d6d6d6"/></g><g transform="translate(24.00 345.00)" ><defs><linearGradient id="gr1" x1="0" x2="1" y1="0" y2="0"><stop offset="0" stop-color="#bdbdbd"/><stop offset="1" stop-color="#4c4c4c"/></linearGradient></defs><rect x="-9.3" y="-8.6" width="18.6" height="17.2" fill="url(#gr1)" stroke="#d6d6d6" stroke-width="1.3"/><path d="M-9 0H9" stroke="#d6d6d6" stroke-width="1.2"/><circle cx="-9.6" cy="0.3" r="2.3" fill="#d6d6d6"/><circle cx="9" cy="0.3" r="2.2" fill="#555" stroke="#d6d6d6" stroke-width="1.2"/></g><g transform="translate(24.00 384.20)" ><path d="M-8.2 -9.2H8.2V-6.2H7.2C7 -7.4 6.4 -7.8 5 -7.8H1.15V8C1.15 8.7 1.7 9 4.1 9.1V10.2H-4.1V9.1C-1.7 9 -1.15 8.7 -1.15 8V-7.8H-5C-6.4 -7.8 -7 -7.4 -7.2 -6.2H-8.2Z" fill="#d6d6d6"/></g><g transform="translate(24.00 423.20)" ><path d="M3.4 -5L8.8 -10.4C10.6 -12.2 13.4 -9.6 11.6 -7.6L6.4 -1.8Z" fill="#d6d6d6" stroke="#d6d6d6" stroke-width="1.2" stroke-linejoin="round"/><path d="M1.6 -3.4L5.4 0.6C1.4 6 -4.6 8.6 -11.4 9.4L-10.8 8.4Z" fill="#6a6a6a" stroke="#d6d6d6" stroke-width="1.3" stroke-linejoin="round"/></g><g transform="translate(24.00 461.60)" ><circle cx="-7.2" cy="7.6" r="3" fill="none" stroke="#d6d6d6" stroke-width="1.4"/><circle cx="6" cy="7.6" r="3" fill="none" stroke="#d6d6d6" stroke-width="1.4"/><path d="M-8 -11.6L3.8 5.2L2 6L-8 -11.6Z" fill="#d6d6d6" stroke="#d6d6d6" stroke-width="0.8" stroke-linejoin="round"/><path d="M7 -11.8L0.9 -1L0 -2.4L7 -11.8Z" fill="#d6d6d6" stroke="#d6d6d6" stroke-width="0.8" stroke-linejoin="round"/><path d="M-0.6 1.4L-4.6 5.6" stroke="#d6d6d6" stroke-width="1.4"/></g><g transform="translate(24.00 499.60)" ><g transform="rotate(-45)"><path d="M-6 -5.6H9Q13 -5.6 13 -1.6V1.6Q13 5.6 9 5.6H-6Z" fill="#d6d6d6"/><path d="M-10 -5.4H-5V5.4H-10Q-12.4 5.4 -12.4 3V-3Q-12.4 -5.4 -10 -5.4Z" fill="#6a6a6a" stroke="#d6d6d6" stroke-width="1.2"/></g></g><g transform="translate(24.00 538.40)" ><g transform="rotate(45)"><path d="M-2.3 -14.5Q0 -16.4 2.3 -14.5V-8.8H-2.3Z" fill="#d6d6d6" stroke="#d6d6d6" stroke-width="1"/><rect x="-4.6" y="-8.8" width="9.2" height="2.3" fill="#d6d6d6"/><path d="M-2.4 -6.2H2.4V9.2L0.9 12.6H-0.9L-2.4 9.2Z" fill="#6a6a6a" stroke="#d6d6d6" stroke-width="1.2" stroke-linejoin="round"/></g></g><g transform="translate(24.00 576.80)" ><path d="M-1.2 3.6L-9.6 11.2" stroke="#d6d6d6" stroke-width="3.2" stroke-linecap="round"/><circle cx="4" cy="-3.6" r="7.4" fill="#6a6a6a" stroke="#d6d6d6" stroke-width="1.3"/></g><g transform="translate(24.00 615.20)" ><rect x="-9.6" y="-9.7" width="19.2" height="19.2" fill="none" stroke="#d6d6d6" stroke-width="1.2"/><rect x="-9.6" y="-2.4" width="12" height="12" fill="#6a6a6a" stroke="#d6d6d6" stroke-width="1.2"/><rect x="-11" y="-11" width="2.8" height="2.8" fill="#d6d6d6"/><rect x="8.2" y="-11" width="2.8" height="2.8" fill="#d6d6d6"/><rect x="-11" y="8.2" width="2.8" height="2.8" fill="#d6d6d6"/><rect x="8.2" y="8.2" width="2.8" height="2.8" fill="#d6d6d6"/><rect x="-11" y="-3.8" width="2.8" height="2.8" fill="#d6d6d6"/><rect x="1" y="-3.8" width="2.8" height="2.8" fill="#d6d6d6"/><rect x="1" y="8.2" width="2.8" height="2.8" fill="#d6d6d6"/></g><g transform="translate(24.00 653.60)" ><rect x="-10.4" y="-8" width="20.8" height="16" fill="#6a6a6a" stroke="#d6d6d6" stroke-width="1.3"/></g><g transform="translate(24.00 692.00)" ><rect x="-10.4" y="-8" width="20.8" height="16" rx="4.5" fill="#6a6a6a" stroke="#d6d6d6" stroke-width="1.3"/></g><g transform="translate(24.00 730.40)" ><ellipse cx="0" cy="0" rx="11.5" ry="9.2" fill="#6a6a6a" stroke="#d6d6d6" stroke-width="1.3"/></g><g transform="translate(24.00 768.80)" ><path d="M-11.3 0L-5.8 -9.3H5.8L11.3 0L5.8 9.3H-5.8Z" fill="#6a6a6a" stroke="#d6d6d6" stroke-width="1.3" stroke-linejoin="round"/></g><g transform="translate(24.00 807.20)" ><path d="M0.00 -11.50L3.53 -3.95L11.79 -2.93L5.71 2.75L7.29 10.93L0.00 6.90L-7.29 10.93L-5.71 2.75L-11.79 -2.93L-3.53 -3.95Z" fill="#6a6a6a" stroke="#d6d6d6" stroke-width="1.3" stroke-linejoin="miter"/></g><g transform="translate(24.00 845.60)" ><path d="M-10.6 10.2L10.8 -10.6" stroke="#d6d6d6" stroke-width="1.3"/></g><g transform="translate(24.00 884.00)" ><path d="M-10.6 10.8C-10.6 -0.5 -0.5 -10.6 10.8 -10.8L-9 10.8Z" fill="#6a6a6a"/><path d="M-10.6 10.8C-10.6 -0.5 -0.5 -10.6 10.8 -10.8" fill="none" stroke="#d6d6d6" stroke-width="1.4"/></g><g transform="translate(24.00 921.10)" ><path d="M-9 -8H4L9.5 -2.5V9.5H-9Z" fill="#6a6a6a" stroke="#d6d6d6" stroke-width="1.3" stroke-linejoin="miter"/><path d="M4 -8V-2.5H9.5Z" fill="#d6d6d6"/><path d="M-9 -12V12M-12 -8H-9M-12 9.5H12M9.5 12V9.5" stroke="#d6d6d6" stroke-width="1.4" fill="none"/></g>
</svg>
<div class="a" style="left:1680.5px;top:36px;width:44.5px;height:31px;background:#5a5a5a;border-radius:3px"></div>
<div class="a" style="left:1819.2px;top:41px;width:61px;height:21px;background:#383838;border-radius:3px 0 0 3px"></div>
<div class="a" style="left:1879px;top:41px;width:20.6px;height:21px;background:#5a5a5a;border-radius:0 3px 3px 0"></div>
<svg width="1920" height="1350" viewBox="0 0 1920 1350"><path d="M168.6 45V60.5M168.6 45L181.8 58" stroke="#d6d6d6" stroke-width="1.3" fill="none"/><circle cx="168.8" cy="44.8" r="2.7" fill="#d6d6d6"/><path d="M192.5 61C193 52 197 44.8 203.6 44.8C210 44.8 214.3 52 214.8 61" stroke="#d6d6d6" stroke-width="1.3" fill="none"/><circle cx="203.6" cy="44.8" r="2.7" fill="#d6d6d6"/><path d="M242.6 60.8L263 41.2M240.8 46.4H247.4" stroke="#d6d6d6" stroke-width="1.3" fill="none"/><circle cx="252.8" cy="51" r="2.9" fill="#d6d6d6"/><path d="M274 61L294.6 41" stroke="#d6d6d6" stroke-width="1.3" stroke-dasharray="3.5 2" fill="none"/><circle cx="277.8" cy="57" r="2.9" fill="#d6d6d6"/><circle cx="290.2" cy="45" r="2.9" fill="#d6d6d6"/><path d="M305 60.8L325.6 41.2" stroke="#d6d6d6" stroke-width="1.3" fill="none"/><circle cx="315.2" cy="51" r="2.9" fill="#d6d6d6"/><path d="M317.4 55.6L324.4 59M317.4 60.6L324.4 57" stroke="#d6d6d6" stroke-width="1" fill="none"/><circle cx="325.3" cy="56" r="1.3" fill="none" stroke="#d6d6d6" stroke-width="0.9"/><circle cx="325.3" cy="60.3" r="1.3" fill="none" stroke="#d6d6d6" stroke-width="0.9"/><path d="M1689.6 51.4C1693.5 45.2 1698 43.2 1702.2 43.2C1706.4 43.2 1710.9 45.2 1714.8 51.4C1710.9 57.6 1706.4 59.6 1702.2 59.6C1698 59.6 1693.5 57.6 1689.6 51.4Z" fill="#9a9a9a"/><circle cx="1702.2" cy="51.4" r="5.6" fill="#5a5a5a"/><circle cx="1702.2" cy="51.4" r="2.6" fill="#9a9a9a"/><rect x="1717" y="60" width="1.8" height="1.8" fill="#9a9a9a"/><circle cx="1763" cy="50.9" r="6.3" fill="#666" stroke="#d6d6d6" stroke-width="1.4"/><path d="M1767.4 55.4L1772 60" stroke="#d6d6d6" stroke-width="2.6" stroke-linecap="round"/><path d="M1760.6 50.9H1765.4" stroke="#d6d6d6" stroke-width="1.5"/><circle cx="1793" cy="51" r="8.3" fill="#666" stroke="#d6d6d6" stroke-width="1.4"/><path d="M1799 57.2L1804.4 62.4" stroke="#d6d6d6" stroke-width="2.8" stroke-linecap="round"/><path d="M1790 51H1796M1793 48V54" stroke="#d6d6d6" stroke-width="1.5"/><path d="M1885.2 50.4L1889.4 54.4L1893.6 50.4" stroke="#d6d6d6" stroke-width="1.3" fill="none"/></svg>
<svg width="1920" height="1350" viewBox="0 0 1920 1350"><path d="M845.8 5H856.5L860.2 8.6V21.2H845.8Z" fill="#fff"/><circle cx="853" cy="11.5" r="3.6" fill="#e8c9a0"/><ellipse cx="853" cy="12.6" rx="2" ry="1.8" fill="#5a3a1c"/><path d="M849.4 21.2C849.4 17 856.6 17 856.6 21.2Z" fill="#f0d9b5"/><rect x="850.4" y="15.6" width="5.2" height="1.8" fill="#7da7f5"/></svg>
<div class="t" style="left:867.6px;top:5.6px;font-size:16px;color:#d8d8d8;-webkit-text-stroke:0.2px currentColor;letter-spacing:0.22px;">Dog-Pug (50.00%)</div>
<div class="t" style="left:1009.6px;top:5.6px;font-size:16px;color:#8f8f8f;-webkit-text-stroke:0.2px currentColor;">— Edited</div>
<div class="t" style="left:59.0px;top:44.0px;font-size:14px;color:#e0e0e0;-webkit-text-stroke:0.5px currentColor;">Move</div>
<div class="t" style="left:1822.4px;top:43.8px;font-size:14px;color:#e0e0e0;letter-spacing:0.3px;">50%</div>
<div class="ph" style="top:78.5px"></div><svg width="1920" height="1350" viewBox="0 0 1920 1350"><path d="M1629.3 85.2L1639.7 95.6M1639.7 85.2L1629.3 95.6" stroke="#d6d6d6" stroke-width="1.2"/><path d="M1898.6 88.8L1902.9 93.0L1907.2 88.8" stroke="#d6d6d6" stroke-width="1.3" fill="none"/></svg><div class="t" style="left:1650.8px;top:81.8px;font-size:14px;color:#e0e0e0;letter-spacing:0.2px;">Geometry</div>
<div class="fld" style="left:1689.7px;top:117.0px;width:83.3px"></div>
<div class="t" style="left:1694.5px;top:119.1px;font-size:14px;color:#e2e2e2;letter-spacing:0.18px;">624 px</div>
<div class="fld" style="left:1809.7px;top:117.0px;width:83.3px"></div>
<div class="t" style="left:1814.5px;top:119.1px;font-size:14px;color:#e2e2e2;letter-spacing:0.18px;">646.7 px</div>
<div class="fld" style="left:1689.7px;top:151.6px;width:83.3px"></div>
<div class="t" style="left:1694.5px;top:153.7px;font-size:14px;color:#e2e2e2;letter-spacing:0.18px;">760.1 px</div>
<div class="fld" style="left:1809.7px;top:151.6px;width:83.3px"></div>
<div class="t" style="left:1814.5px;top:153.7px;font-size:14px;color:#e2e2e2;letter-spacing:0.18px;">401.4 px</div>
<div class="fld" style="left:1689.7px;top:191.8px;width:70.0px"></div>
<div class="t" style="left:1694.5px;top:193.9px;font-size:14px;color:#e2e2e2;letter-spacing:0.18px;">0.0°</div>
<div class="fld" style="left:1689.7px;top:233.2px;width:83.3px"></div>
<div class="t" style="left:1694.5px;top:235.3px;font-size:14px;color:#e2e2e2;letter-spacing:0.18px;">0.0°</div>
<div class="fld" style="left:1809.7px;top:232.0px;width:83.3px"></div>
<div class="t" style="left:1814.5px;top:234.1px;font-size:14px;color:#e2e2e2;letter-spacing:0.18px;">0.0°</div>
<div class="t" style="left:1670.6px;top:119.4px;font-size:14px;color:#e0e0e0;">X:</div>
<div class="t" style="left:1788.0px;top:119.4px;font-size:14px;color:#e0e0e0;">W:</div>
<div class="t" style="left:1671.0px;top:154.0px;font-size:14px;color:#e0e0e0;">Y:</div>
<div class="t" style="left:1790.2px;top:154.0px;font-size:14px;color:#e0e0e0;">H:</div>
<div class="sep" style="top:309px"></div>
<div class="cb" style="top:322px"></div>
<div class="t" style="left:1654.6px;top:321.8px;font-size:14px;color:#e0e0e0;letter-spacing:0.12px;">Scale Stroke and Effects</div>
<div class="pd" style="top:351px"></div>
<div class="ph" style="top:353.5px"></div><svg width="1920" height="1350" viewBox="0 0 1920 1350"><path d="M1629.3 360.2L1639.7 370.6M1639.7 360.2L1629.3 370.6" stroke="#d6d6d6" stroke-width="1.2"/><path d="M1898.6 363.8L1902.9 368.0L1907.2 363.8" stroke="#d6d6d6" stroke-width="1.3" fill="none"/></svg><div class="t" style="left:1650.8px;top:356.8px;font-size:14px;color:#e0e0e0;letter-spacing:0.2px;">Layers</div>
<div class="fld" style="left:1659.7px;top:385.8px;width:45px;height:21px;border-radius:3px 0 0 3px;background:#363636"></div>
<div class="fld" style="left:1704.2px;top:385.8px;width:20px;height:21px;border-radius:0 3px 3px 0;background:#585858"></div>
<div class="fld" style="left:1737.2px;top:385.8px;width:171px;height:21px;background:#585858"></div>
<div class="t" style="left:1664.2px;top:388.0px;font-size:14px;color:#e2e2e2;">100%</div>
<div class="t" style="left:1749.4px;top:388.0px;font-size:14px;color:#e2e2e2;">Normal</div>
<div class="sep" style="top:413px"></div>
<div class="cb" style="top:422.8px"></div>
<div class="bar" style="top:415.4px;height:31.4px"></div>
<div class="th" style="left:1687.0px;top:418.9px"><svg width="24.3" height="24.3" viewBox="0 0 24 24" style="position:absolute;left:0;top:0;overflow:hidden"><g transform="translate(-7.335 -6.278) scale(0.02332)"><use href="#p-dog"/></g></svg></div>
<div class="t" style="left:1717.4px;top:422.9px;font-size:13.6px;color:#e2e2e2;letter-spacing:0.34px;">Dog</div>
<div class="row" style="top:448.4px;height:31px;background:#3e5172"></div>
<div class="cb" style="top:455.8px"></div>
<div class="bar" style="top:448.4px;height:31.4px"></div>
<div class="th" style="left:1701.0px;top:451.9px"><svg width="24.3" height="24.3" viewBox="0 0 24 24" style="position:absolute;left:0;top:0;overflow:hidden"><g transform="translate(-39.390 -32.550) scale(0.06170)"><use href="#p-muz"/></g></svg></div>
<div class="t" style="left:1731.4px;top:455.9px;font-size:13.6px;color:#e2e2e2;letter-spacing:0.34px;">CompoundGroup</div>
<div class="cb" style="top:488.2px"></div>
<div class="bar" style="top:480.8px;height:31.4px"></div>
<div class="th" style="left:1701.0px;top:484.3px"><svg width="24.3" height="24.3" viewBox="0 0 24 24" style="position:absolute;left:0;top:0;overflow:hidden"><g transform="translate(-86.960 -86.000) scale(0.11880)"><use href="#p-nose"/></g></svg></div>
<div class="t" style="left:1731.4px;top:488.3px;font-size:13.6px;color:#e2e2e2;letter-spacing:0.34px;">CompoundGroup</div>
<div class="cb" style="top:520.6px"></div>
<div class="bar" style="top:513.2px;height:31.4px"></div>
<div class="th" style="left:1701.0px;top:516.7px"><svg width="24.3" height="24.3" viewBox="0 0 24 24" style="position:absolute;left:0;top:0;overflow:hidden"><g transform="translate(-27.560 -19.980) scale(0.04750)"><use href="#p-mask"/></g></svg></div>
<div class="t" style="left:1731.4px;top:520.7px;font-size:13.6px;color:#e2e2e2;letter-spacing:0.34px;">CompoundGroup</div>
<div class="cb" style="top:553.0px"></div>
<div class="bar" style="top:545.6px;height:31.4px"></div>
<div class="th" style="left:1701.0px;top:549.1px"><svg width="24.3" height="24.3" viewBox="0 0 24 24" style="position:absolute;left:0;top:0;overflow:hidden"><path d="M0.3 8.4C3 10.6 7 12 12 12C17 12 21 10.6 23.7 8.4L24 12.4C21.4 14.6 17 16.2 12 16.2C7 16.2 2.6 14.6 0 12.4Z" fill="#87b1ff"/></svg></div>
<div class="t" style="left:1731.4px;top:553.1px;font-size:13.6px;color:#e2e2e2;letter-spacing:0.34px;">Shape 3</div>
<div class="cb" style="top:585.4px"></div>
<div class="bar" style="top:578.0px;height:31.4px"></div>
<div class="th" style="left:1701.0px;top:581.5px"><svg width="24.3" height="24.3" viewBox="0 0 24 24" style="position:absolute;left:0;top:0;overflow:hidden"><path d="M5.5 1C10 3 16 6 18.5 10C17 13 14 16 13 18C12.5 20 12 22 11.5 23C10.5 21 10 17 9.5 14C9 9 8 5 5.5 1Z" fill="#f7dfbc"/></svg></div>
<div class="t" style="left:1731.4px;top:585.5px;font-size:13.6px;color:#e2e2e2;letter-spacing:0.34px;">Path</div>
<div class="cb" style="top:617.8px"></div>
<div class="bar" style="top:610.4px;height:31.4px"></div>
<div class="th" style="left:1701.0px;top:613.9px"><svg width="24.3" height="24.3" viewBox="0 0 24 24" style="position:absolute;left:0;top:0;overflow:hidden"><path d="M19 1C14.5 3 8 6 5 10.5C6.5 13.5 10 15.5 12 17.5C13.5 19 14.5 21.5 16 23C16.5 20 16 17 16 14C16 9 17 5 19 1Z" fill="#f7dfbc"/></svg></div>
<div class="t" style="left:1731.4px;top:617.9px;font-size:13.6px;color:#e2e2e2;letter-spacing:0.34px;">Path</div>
<div class="cb" style="top:650.2px"></div>
<div class="bar" style="top:642.8px;height:31.4px"></div>
<div class="th" style="left:1701.0px;top:646.3px"><svg width="24.3" height="24.3" viewBox="0 0 24 24" style="position:absolute;left:0;top:0;overflow:hidden"><path d="M1.5 12C1.5 5 5 1 12 1C19 1 22.5 5 22.5 12C22.5 19 19 23.5 12 23.5C5 23.5 1.5 19 1.5 12Z" fill="#f7dfbc"/></svg></div>
<div class="t" style="left:1731.4px;top:650.3px;font-size:13.6px;color:#e2e2e2;letter-spacing:0.34px;">Path</div>
<div class="cb" style="top:682.6px"></div>
<div class="bar" style="top:675.2px;height:31.4px"></div>
<div class="th" style="left:1701.0px;top:678.7px"><svg width="24.3" height="24.3" viewBox="0 0 24 24" style="position:absolute;left:0;top:0;overflow:hidden"><path d="M0.5 17.5C1.5 10 5 6.5 12 6.5C19 6.5 22.5 10 23.5 17.5Z" fill="#f7dfbc"/></svg></div>
<div class="t" style="left:1731.4px;top:682.7px;font-size:13.6px;color:#e2e2e2;letter-spacing:0.34px;">Path</div>
<div class="a" style="left:1620px;top:415.8px;width:2px;height:31px;background:#e8e8e8"></div>
<div class="sep" style="top:813px"></div>
<div class="pd" style="top:851px"></div>
<div class="ph" style="top:853.5px"></div><svg width="1920" height="1350" viewBox="0 0 1920 1350"><path d="M1629.3 860.2L1639.7 870.6M1639.7 860.2L1629.3 870.6" stroke="#d6d6d6" stroke-width="1.2"/><path d="M1898.6 863.8L1902.9 868.0L1907.2 863.8" stroke="#d6d6d6" stroke-width="1.3" fill="none"/></svg><div class="t" style="left:1650.8px;top:856.8px;font-size:14px;color:#e0e0e0;letter-spacing:0.2px;">Appearance</div>
<div class="cb" style="top:883.6px"></div>
<div class="t" style="left:1659.6px;top:883.6px;font-size:14px;color:#e2e2e2;letter-spacing:0.1px;">Stroke</div>
<div class="fld" style="left:1778.3px;top:881.6px;width:59.7px"></div>
<div class="t" style="left:1783.2px;top:883.6px;font-size:14px;color:#e2e2e2;">1 pt</div>
<div class="cb" style="top:916.2px"></div>
<div class="t" style="left:1659.6px;top:915.8px;font-size:14px;color:#e2e2e2;letter-spacing:0.3px;">Fill</div>
<div class="sep" style="top:1093px"></div>
<div class="pd" style="top:1130px"></div>
<div class="ph" style="top:1132.5px"></div><svg width="1920" height="1350" viewBox="0 0 1920 1350"><path d="M1629.3 1139.2L1639.7 1149.6M1639.7 1139.2L1629.3 1149.6" stroke="#d6d6d6" stroke-width="1.2"/><path d="M1898.6 1142.8L1902.9 1147.0L1907.2 1142.8" stroke="#d6d6d6" stroke-width="1.3" fill="none"/></svg><div class="t" style="left:1650.8px;top:1135.8px;font-size:14px;color:#e0e0e0;letter-spacing:0.2px;">Sheets</div>
<div class="row" style="top:1158.2px;height:30.6px;background:#2f4e70"></div>
<div class="cb" style="top:1165.4px"></div>
<div class="t" style="left:1659.6px;top:1165.2px;font-size:14px;color:#e2e2e2;letter-spacing:0.1px;">Sheet 1</div>
<div class="sep" style="top:1313px"></div>
<svg width="1920" height="1350" viewBox="0 0 1920 1350">
<rect x="1634.6" y="130.2" width="24.2" height="24.2" fill="none" stroke="#c8c8c8" stroke-width="1"/>
<circle cx="1634.6" cy="130.2" r="2.9" fill="#2f8fff"/>
<circle cx="1646.7" cy="130.2" r="2.9" fill="#c8c8c8"/>
<circle cx="1658.8" cy="130.2" r="2.9" fill="#c8c8c8"/>
<circle cx="1634.6" cy="142.3" r="2.9" fill="#c8c8c8"/>
<circle cx="1646.7" cy="142.3" r="2.9" fill="#c8c8c8"/>
<circle cx="1658.8" cy="142.3" r="2.9" fill="#c8c8c8"/>
<circle cx="1634.6" cy="154.4" r="2.9" fill="#c8c8c8"/>
<circle cx="1646.7" cy="154.4" r="2.9" fill="#c8c8c8"/>
<circle cx="1658.8" cy="154.4" r="2.9" fill="#c8c8c8"/>
<path d="M1898.6 143.2V141.8C1898.6 136.6 1906.6 136.6 1906.6 141.8V143.2M1898.6 148.4V149.8C1898.6 155 1906.6 155 1906.6 149.8V148.4" stroke="#d6d6d6" stroke-width="1.1" fill="none"/>
<path d="M1666.6 196.4A8.4 8.4 0 1 1 1664.6 203" stroke="#d6d6d6" stroke-width="1.2" fill="none"/><path d="M1664.6 193.6L1668.6 197.8L1664.2 198.6Z" fill="#d6d6d6"/>
<circle cx="1768.4" cy="202.4" r="19" fill="#5c5c5c"/><circle cx="1782.8" cy="202.4" r="3.7" fill="#d0d0d0"/>
<path d="M1668.6 236.4H1682.4L1676.2 249.6H1662.6Z" stroke="#d6d6d6" stroke-width="1.2" fill="none"/>
<path d="M1791.6 236.6L1803.2 233.6V247.6L1791.6 250.4Z" stroke="#d6d6d6" stroke-width="1.2" fill="none"/>
<path d="M1694.4 272.2V291.6H1683.4Z" fill="#9d9d9d"/><path d="M1696.4 272.2L1707.2 291.6H1696.4Z" fill="#d2d2d2"/>
<path d="M1729 271.2L1747.6 281.4H1729Z" fill="#9d9d9d"/><path d="M1729 283.4H1747.6L1729 293.8Z" fill="#d2d2d2"/>
<path d="M1815.4 293V285C1815.4 281 1813 278.6 1809 278.6H1800" stroke="#d6d6d6" stroke-width="2.4" fill="none"/><path d="M1804.6 272.6L1798.6 278.6L1804.6 284.6" stroke="#d6d6d6" stroke-width="2.4" fill="none"/>
<path d="M1844.2 293V285C1844.2 281 1846.6 278.6 1850.6 278.6H1859.6" stroke="#d6d6d6" stroke-width="2.4" fill="none"/><path d="M1855 272.6L1861 278.6L1855 284.6" stroke="#d6d6d6" stroke-width="2.4" fill="none"/>
<circle cx="1642.4" cy="395.8" r="10" fill="#787878" stroke="#d6d6d6" stroke-width="1.5"/>
<clipPath id="opc"><circle cx="1642.4" cy="395.8" r="9.2"/></clipPath><g clip-path="url(#opc)" fill="#4a4a4a"><rect x="1632.4" y="385.8" width="5" height="5"/><rect x="1642.4" y="385.8" width="5" height="5"/><rect x="1637.4" y="390.8" width="5" height="5"/><rect x="1647.4" y="390.8" width="5" height="5"/><rect x="1632.4" y="395.8" width="5" height="5"/><rect x="1642.4" y="395.8" width="5" height="5"/><rect x="1637.4" y="400.8" width="5" height="5"/><rect x="1647.4" y="400.8" width="5" height="5"/></g>
<path d="M1709.6 395.6L1713.9 399.6L1718.2 395.6" stroke="#d6d6d6" stroke-width="1.3" fill="none"/>
<path d="M1893.6 395.6L1897.9 399.6L1902.2 395.6" stroke="#d6d6d6" stroke-width="1.3" fill="none"/>
<path d="M1634.9 431.4L1638.7 435.4L1645.4 426.4" stroke="#e2e2e2" stroke-width="1.8" fill="none"/>
<rect x="1895.9" y="430.6" width="9.8" height="7.6" fill="#606060"/><path d="M1904.4 430.6V428.2C1904.4 423.6 1898.0 423.6 1898.0 427.6" stroke="#606060" stroke-width="1.2" fill="none"/>
<path d="M1634.9 464.4L1638.7 468.4L1645.4 459.4" stroke="#e2e2e2" stroke-width="1.8" fill="none"/>
<rect x="1895.9" y="463.6" width="9.8" height="7.6" fill="#5d7294"/><path d="M1904.4 463.6V461.2C1904.4 456.6 1898.0 456.6 1898.0 460.6" stroke="#5d7294" stroke-width="1.2" fill="none"/>
<path d="M1634.9 496.8L1638.7 500.8L1645.4 491.8" stroke="#e2e2e2" stroke-width="1.8" fill="none"/>
<rect x="1895.9" y="496.0" width="9.8" height="7.6" fill="#606060"/><path d="M1904.4 496.0V493.6C1904.4 489.0 1898.0 489.0 1898.0 493.0" stroke="#606060" stroke-width="1.2" fill="none"/>
<path d="M1634.9 529.2L1638.7 533.2L1645.4 524.2" stroke="#e2e2e2" stroke-width="1.8" fill="none"/>
<rect x="1895.9" y="528.4" width="9.8" height="7.6" fill="#606060"/><path d="M1904.4 528.4V526.0C1904.4 521.4 1898.0 521.4 1898.0 525.4" stroke="#606060" stroke-width="1.2" fill="none"/>
<path d="M1634.9 561.6L1638.7 565.6L1645.4 556.6" stroke="#e2e2e2" stroke-width="1.8" fill="none"/>
<rect x="1895.9" y="560.8" width="9.8" height="7.6" fill="#606060"/><path d="M1904.4 560.8V558.4C1904.4 553.8 1898.0 553.8 1898.0 557.8" stroke="#606060" stroke-width="1.2" fill="none"/>
<path d="M1634.9 594.0L1638.7 598.0L1645.4 589.0" stroke="#e2e2e2" stroke-width="1.8" fill="none"/>
<rect x="1895.9" y="593.2" width="9.8" height="7.6" fill="#606060"/><path d="M1904.4 593.2V590.8C1904.4 586.2 1898.0 586.2 1898.0 590.2" stroke="#606060" stroke-width="1.2" fill="none"/>
<path d="M1634.9 626.4L1638.7 630.4L1645.4 621.4" stroke="#e2e2e2" stroke-width="1.8" fill="none"/>
<rect x="1895.9" y="625.6" width="9.8" height="7.6" fill="#606060"/><path d="M1904.4 625.6V623.2C1904.4 618.6 1898.0 618.6 1898.0 622.6" stroke="#606060" stroke-width="1.2" fill="none"/>
<path d="M1634.9 658.8L1638.7 662.8L1645.4 653.8" stroke="#e2e2e2" stroke-width="1.8" fill="none"/>
<rect x="1895.9" y="658.0" width="9.8" height="7.6" fill="#606060"/><path d="M1904.4 658.0V655.6C1904.4 651.0 1898.0 651.0 1898.0 655.0" stroke="#606060" stroke-width="1.2" fill="none"/>
<path d="M1634.9 691.2L1638.7 695.2L1645.4 686.2" stroke="#e2e2e2" stroke-width="1.8" fill="none"/>
<rect x="1895.9" y="690.4" width="9.8" height="7.6" fill="#606060"/><path d="M1904.4 690.4V688.0C1904.4 683.4 1898.0 683.4 1898.0 687.4" stroke="#606060" stroke-width="1.2" fill="none"/>
<path d="M1672.4 429.4L1676.7 433.6L1681 429.4" stroke="#d6d6d6" stroke-width="1.3" fill="none"/>
<path d="M1631.9 831.6H1648.5M1640.2 823.3V839.9" stroke="#d6d6d6" stroke-width="1.5"/>
<circle cx="1669" cy="829" r="6.6" fill="#5c5c5c" stroke="#d6d6d6" stroke-width="1.2"/><path d="M1674 834.4L1679.6 839.8" stroke="#d6d6d6" stroke-width="2.4" stroke-linecap="round"/>
<path d="M1890.4 827.4H1901.6L1900.4 841.6H1891.6Z" fill="#b4b4b4"/><rect x="1889.7" y="824.6" width="12.6" height="2" fill="#b4b4b4"/><path d="M1893.4 824.6V822.6H1898.6V824.6" stroke="#b4b4b4" stroke-width="1.2" fill="none"/>
<circle cx="1858.6" cy="892.0" r="5.8" fill="none" stroke="#d6d6d6" stroke-width="2"/><path d="M1865.20 892.00L1868.00 892.00M1863.27 896.67L1865.25 898.65M1858.60 898.60L1858.60 901.40M1853.93 896.67L1851.95 898.65M1852.00 892.00L1849.20 892.00M1853.93 887.33L1851.95 885.35M1858.60 885.40L1858.60 882.60M1863.27 887.33L1865.25 885.35" stroke="#d6d6d6" stroke-width="2.4"/>
<circle cx="1892.2" cy="892" r="12.2" fill="#000"/><circle cx="1892.2" cy="892" r="4.4" fill="#4a4a4a"/>
<path d="M1634.9 924.8L1638.7 928.8L1645.4 919.8" stroke="#e2e2e2" stroke-width="1.8" fill="none"/>
<circle cx="1892.2" cy="924.2" r="12.4" fill="#8b6a50" stroke="#353535" stroke-width="1"/>
<path d="M1631.9 1112.2H1648.5M1640.2 1103.9V1120.5" stroke="#d6d6d6" stroke-width="1.5"/>
<circle cx="1671.8" cy="1112.2" r="8" fill="none" stroke="#d6d6d6" stroke-width="3.4"/>
<circle cx="1705.4" cy="1112.2" r="9.6" fill="#d6d6d6"/>
<path d="M1864.6 1104L1868 1103.4L1863.6 1112.6L1861.6 1111.6Z" fill="#d6d6d6"/><path d="M1853 1115C1856 1113.4 1858.4 1111.6 1859.6 1109.8L1865.4 1112.6C1865.6 1116 1865.2 1119 1864.4 1121.6C1860 1121.4 1855.6 1119 1853 1115Z" fill="#d6d6d6"/>
<path d="M1890.4 1108.0H1901.6L1900.4 1122.2H1891.6Z" fill="#888"/><rect x="1889.7" y="1105.2" width="12.6" height="2" fill="#888"/><path d="M1893.4 1105.2V1103.2H1898.6V1105.2" stroke="#888" stroke-width="1.2" fill="none"/>
<path d="M1634.9 1174.0L1638.7 1178.0L1645.4 1169.0" stroke="#e2e2e2" stroke-width="1.8" fill="none"/>
<circle cx="1894.6" cy="1173.6" r="5.8" fill="none" stroke="#d6d6d6" stroke-width="2"/><path d="M1901.20 1173.60L1904.00 1173.60M1899.27 1178.27L1901.25 1180.25M1894.60 1180.20L1894.60 1183.00M1889.93 1178.27L1887.95 1180.25M1888.00 1173.60L1885.20 1173.60M1889.93 1168.93L1887.95 1166.95M1894.60 1167.00L1894.60 1164.20M1899.27 1168.93L1901.25 1166.95" stroke="#d6d6d6" stroke-width="2.4"/>
<path d="M1631.9 1332.2H1648.5M1640.2 1323.9V1340.5" stroke="#d6d6d6" stroke-width="1.5"/>
<path d="M1661 1327H1672M1672 1327L1661 1337.4M1661 1337.4H1672" stroke="#d6d6d6" stroke-width="1.2" fill="none"/>
<rect x="1658.4" y="1324.4" width="5.2" height="5.2" fill="#909090" stroke="#d6d6d6" stroke-width="1"/>
<rect x="1669.6" y="1324.4" width="5.2" height="5.2" fill="#909090" stroke="#d6d6d6" stroke-width="1"/>
<rect x="1658.4" y="1334.8" width="5.2" height="5.2" fill="#909090" stroke="#d6d6d6" stroke-width="1"/>
<rect x="1669.6" y="1334.8" width="5.2" height="5.2" fill="#909090" stroke="#d6d6d6" stroke-width="1"/>
<path d="M1889.4 1327.8H1900.6L1899.4 1342.0H1890.6Z" fill="#888"/><rect x="1888.7" y="1325.0" width="12.6" height="2" fill="#888"/><path d="M1892.4 1325.0V1323.0H1897.6V1325.0" stroke="#888" stroke-width="1.2" fill="none"/>
</svg>
</body></html>
